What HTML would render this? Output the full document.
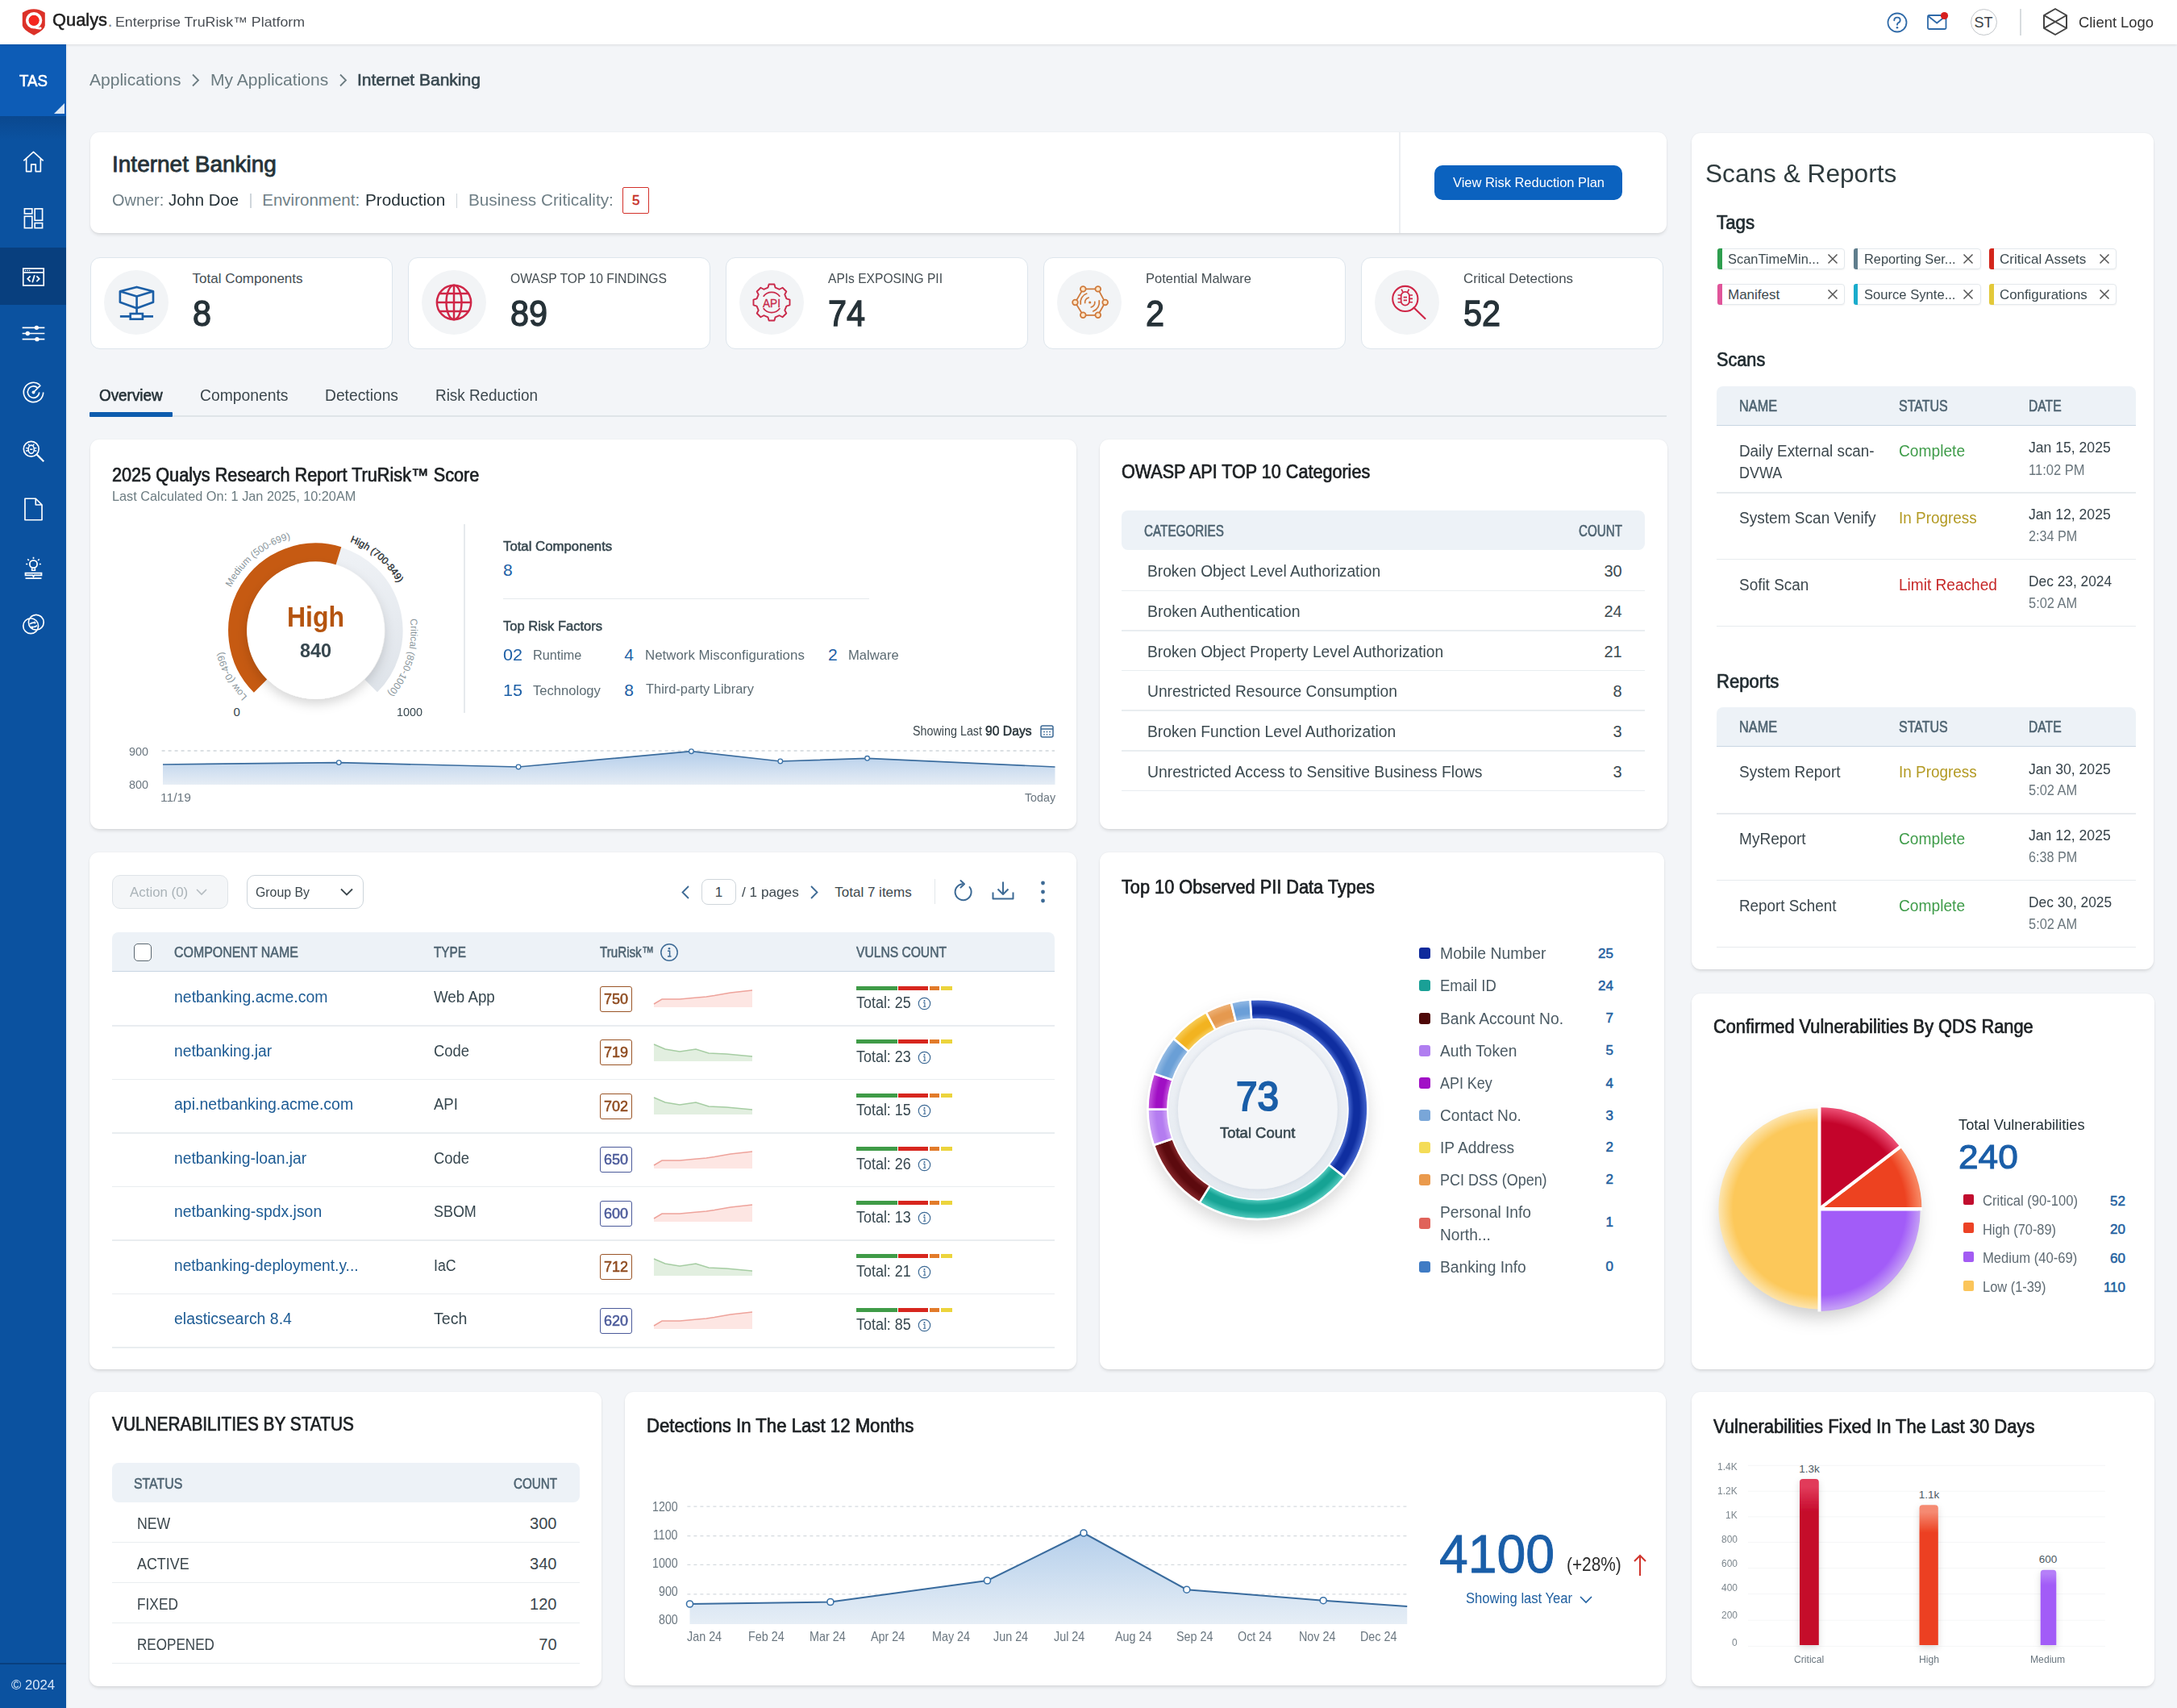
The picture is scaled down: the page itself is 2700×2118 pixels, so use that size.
<!DOCTYPE html><html><head><meta charset="utf-8"><style>
html,body{margin:0;padding:0}
body{width:2700px;height:2118px;overflow:hidden;position:relative;background:#f3f5f8;font-family:"Liberation Sans",sans-serif}
.t{position:absolute;line-height:1;white-space:nowrap;transform-origin:0 50%}
.b{position:absolute}
svg.b{overflow:visible}
</style></head><body>
<div class="b" style="left:0.0px;top:0.0px;width:2700.0px;height:55.0px;background:#fff;box-shadow:0 1px 3px rgba(0,0,0,0.10);z-index:5"></div>
<svg class="b" style="left:26.0px;top:10.0px;z-index:6" width="32" height="36" viewBox="0 0 32 36"><path d="M1.8 5.7 Q15.8 -3 29.8 5.7 L29.8 21.5 Q29.8 27 16.1 33.8 Q2.3 27 1.8 21.5 Z" fill="#dc3128"/>
<circle cx="16.1" cy="15.3" r="8.4" fill="none" stroke="#fff" stroke-width="3.6"/>
<circle cx="16.1" cy="15.3" r="6.2" fill="#f5261e"/>
<path d="M16.5 23.6 Q20.5 25.5 24.2 25" fill="none" stroke="#fff" stroke-width="2.8" stroke-linecap="round"/></svg>
<div class="t" style="left:65.4px;top:14.8px;font-size:21.5px;color:#1e1e1e;transform:scaleX(1.0162);-webkit-text-stroke:0.5px #1e1e1e;z-index:6">Qualys</div>
<div class="t" style="left:133.5px;top:15.4px;font-size:22px;color:#888;z-index:6">.</div>
<div class="t" style="left:142.5px;top:18.6px;font-size:17px;color:#4a4f55;transform:scaleX(1.0452);z-index:6">Enterprise TruRisk™ Platform</div>
<svg class="b" style="left:2339.0px;top:14.0px;z-index:6" width="28" height="28" viewBox="0 0 28 28"><circle cx="14" cy="14" r="11.5" fill="none" stroke="#2f6aa8" stroke-width="1.8"/><path d="M10.3 11.2 Q10.3 7.6 14 7.6 Q17.7 7.6 17.7 11 Q17.7 13.2 15.2 14.3 Q14 14.9 14 16.8" fill="none" stroke="#2f6aa8" stroke-width="1.9" stroke-linecap="round"/><circle cx="14" cy="20.2" r="1.3" fill="#2f6aa8"/></svg>
<svg class="b" style="left:2389.0px;top:14.0px;z-index:6" width="30" height="26" viewBox="0 0 30 26"><rect x="2" y="5" width="22.5" height="17" rx="1.5" fill="none" stroke="#2f6aa8" stroke-width="1.8"/><path d="M2.5 6 L13.2 14.5 L24 6" fill="none" stroke="#2f6aa8" stroke-width="1.8"/><circle cx="22.5" cy="5.5" r="4.6" fill="#d71f1f"/></svg>
<div class="b" style="left:2443.5px;top:11px;width:31px;height:31px;border:1.3px solid #c2c6ca;border-radius:50%;z-index:6"></div>
<div class="t" style="left:2448.5px;top:19.3px;font-size:18px;color:#3a3f44;z-index:6">ST</div>
<div class="b" style="left:2505.0px;top:11.0px;width:1.5px;height:33.0px;background:#d8dcdf;z-index:6"></div>
<svg class="b" style="left:2532.0px;top:9.0px;z-index:6" width="34" height="36" viewBox="0 0 34 36"><path d="M17 2 L31 10 L31 26 L17 34 L3 26 L3 10 Z M3 10 L31 26 M31 10 L3 26 M17 2 L17 2" fill="none" stroke="#444" stroke-width="2" stroke-linejoin="round"/></svg>
<div class="t" style="left:2578.0px;top:17.9px;font-size:19px;color:#333;transform:scaleX(0.9675);z-index:6">Client Logo</div>
<div class="b" style="left:0.0px;top:55.0px;width:83.0px;height:2063.0px;background:#0b52a0"></div>
<div class="b" style="left:82.0px;top:55.0px;width:1.5px;height:2063.0px;background:#e9eef4"></div>
<div class="b" style="left:0.0px;top:55.0px;width:82.0px;height:89.0px;background:#0d5cb6"></div>
<div class="b" style="left:0.0px;top:144.0px;width:82.0px;height:30.0px;background:linear-gradient(#0a488f,#0b52a0)"></div>
<div class="t" style="left:24.0px;top:88.7px;font-size:21px;color:#fff;transform:scaleX(0.8909);-webkit-text-stroke:0.63px #fff;">TAS</div>
<svg class="b" style="left:67.0px;top:128.0px;" width="13" height="13" viewBox="0 0 13 13"><path d="M13 0 L13 13 L0 13 Z" fill="#dfe9f5"/></svg>
<div class="b" style="left:0.0px;top:307.0px;width:82.0px;height:71.0px;background:#083f7e"></div>
<svg class="b" style="left:26.0px;top:184.5px;" width="31" height="31" viewBox="0 0 28 28"><path d="M3 13 L14 3 L25 13 M6 10.5 V25 H11.5 V17 H16.5 V25 H22 V10.5" fill="none" stroke="#fff" stroke-width="1.5" stroke-linejoin="round"/></svg>
<svg class="b" style="left:26.0px;top:254.5px;" width="31" height="31" viewBox="0 0 28 28"><rect x="4" y="3.5" width="8.5" height="5.5" fill="none" stroke="#fff" stroke-width="1.5"/><rect x="4" y="12" width="8.5" height="13" fill="none" stroke="#fff" stroke-width="1.5"/><rect x="15.5" y="3.5" width="8.5" height="13" fill="none" stroke="#fff" stroke-width="1.5"/><rect x="15.5" y="19.5" width="8.5" height="5.5" fill="none" stroke="#fff" stroke-width="1.5"/></svg>
<svg class="b" style="left:26.0px;top:327.5px;" width="31" height="31" viewBox="0 0 28 28"><rect x="2.5" y="4.5" width="23" height="19" fill="none" stroke="#fff" stroke-width="1.5"/><path d="M2.5 9 H25.5" stroke="#fff" stroke-width="1.5"/><circle cx="5" cy="6.8" r=".7" fill="#fff"/><circle cx="7.3" cy="6.8" r=".7" fill="#fff"/><circle cx="9.6" cy="6.8" r=".7" fill="#fff"/><path d="M10.5 13 L7.5 16 L10.5 19 M17.5 13 L20.5 16 L17.5 19 M15.2 12 L12.8 20" fill="none" stroke="#fff" stroke-width="1.6"/></svg>
<svg class="b" style="left:26.0px;top:397.5px;" width="31" height="31" viewBox="0 0 28 28"><path d="M1.5 7.5 H26.5 M1.5 14 H26.5 M1.5 20.5 H26.5" stroke="#fff" stroke-width="1.5"/><circle cx="17.5" cy="7.5" r="2.4" fill="#fff"/><circle cx="7.5" cy="14" r="2.4" fill="#fff"/><circle cx="18" cy="20.5" r="2.4" fill="#fff"/></svg>
<svg class="b" style="left:26.0px;top:470.5px;" width="31" height="31" viewBox="0 0 28 28"><path d="M21 5.5 A11 11 0 1 0 25 14" fill="none" stroke="#fff" stroke-width="1.5"/><path d="M18.5 9 A6.5 6.5 0 1 0 20.5 14" fill="none" stroke="#fff" stroke-width="1.5"/><circle cx="14" cy="14" r="1.8" fill="#fff"/><path d="M14 14 L22 6" stroke="#fff" stroke-width="1.5"/></svg>
<svg class="b" style="left:26.0px;top:543.5px;" width="31" height="31" viewBox="0 0 28 28"><circle cx="11.5" cy="11.5" r="8.5" fill="none" stroke="#fff" stroke-width="1.5"/><path d="M17.5 17.5 L25.5 25.5" stroke="#fff" stroke-width="2"/><ellipse cx="11.5" cy="12" rx="3.3" ry="4.6" fill="none" stroke="#fff" stroke-width="1.5"/><path d="M8.2 10.5 H5.5 M8.2 13.5 H5.5 M14.8 10.5 H17.5 M14.8 13.5 H17.5 M9.5 7.8 L8.3 6 M13.5 7.8 L14.7 6 M10 12 H13" stroke="#fff" stroke-width="1.3"/></svg>
<svg class="b" style="left:26.0px;top:615.5px;" width="31" height="31" viewBox="0 0 28 28"><path d="M4.5 2 H16.5 L23.5 9 V26 H4.5 Z M16.5 2 V9 H23.5" fill="none" stroke="#fff" stroke-width="1.5" stroke-linejoin="round"/></svg>
<svg class="b" style="left:26.0px;top:688.5px;" width="31" height="31" viewBox="0 0 28 28"><circle cx="14" cy="9.5" r="4.2" fill="none" stroke="#fff" stroke-width="1.6"/><path d="M12.3 14 V16.5 H15.7 V14" fill="none" stroke="#fff" stroke-width="1.5"/><path d="M14 1.5 V3.5 M7.5 4 L8.9 5.4 M20.5 4 L19.1 5.4 M5.5 9.5 H7.5 M20.5 9.5 H22.5" stroke="#fff" stroke-width="1.5"/><path d="M5 19.5 H23 V22 H15 L14 23.5 L13 22 H5 Z M5 25.5 H23" fill="none" stroke="#fff" stroke-width="1.6"/></svg>
<svg class="b" style="left:26.0px;top:758.5px;" width="31" height="31" viewBox="0 0 28 28"><circle cx="11" cy="15.5" r="8.5" fill="none" stroke="#fff" stroke-width="1.5"/><circle cx="17" cy="11.5" r="8.5" fill="none" stroke="#fff" stroke-width="1.5"/><path d="M10 13.5 Q13 10.8 16.5 12.5 M16.5 12.5 L14.8 10.6 M18 15 Q15 17.8 11.5 16.2 M11.5 16.2 L13.2 18" fill="none" stroke="#fff" stroke-width="1.4"/></svg>
<div class="b" style="left:0.0px;top:2061.5px;width:82.0px;height:2.0px;background:#083f7e"></div>
<div class="t" style="left:14.0px;top:2081.1px;font-size:17px;color:#d6e6f8;transform:scaleX(0.9806);">© 2024</div>
<div class="t" style="left:111.2px;top:88.8px;font-size:20.7px;color:#6b7b80;transform:scaleX(1.0168);">Applications</div>
<svg class="b" style="left:236.0px;top:91.0px;" width="13" height="17" viewBox="0 0 13 17"><path d="M3 1.5 L10 8.5 L3 15.5" fill="none" stroke="#6b7b80" stroke-width="1.8"/></svg>
<div class="t" style="left:260.5px;top:88.8px;font-size:20.7px;color:#6b7b80;transform:scaleX(1.0179);">My Applications</div>
<svg class="b" style="left:419.0px;top:91.0px;" width="13" height="17" viewBox="0 0 13 17"><path d="M3 1.5 L10 8.5 L3 15.5" fill="none" stroke="#6b7b80" stroke-width="1.8"/></svg>
<div class="t" style="left:442.7px;top:88.8px;font-size:20.7px;color:#37474f;transform:scaleX(1.0142);-webkit-text-stroke:0.62px #37474f;">Internet Banking</div>
<div class="b" style="left:112.0px;top:164.0px;width:1955.0px;height:125.0px;background:#fff;border-radius:11px;box-shadow:0 3px 4px -1px rgba(0,0,0,0.12),0 0 2px rgba(0,0,0,0.07);"></div>
<div class="b" style="left:1735.0px;top:164.0px;width:1.5px;height:125.0px;background:#eceff2"></div>
<div class="t" style="left:139.0px;top:190.3px;font-size:28px;color:#263238;-webkit-text-stroke:0.84px #263238;">Internet Banking</div>
<div class="t" style="left:138.5px;top:238.1px;font-size:20.5px;color:#6f7f86;transform:scaleX(0.9728);">Owner:</div>
<div class="t" style="left:208.8px;top:238.1px;font-size:20.5px;color:#263238;transform:scaleX(0.9936);">John Doe</div>
<div class="b" style="left:310.2px;top:240.0px;width:1.5px;height:18.0px;background:#cfd6db"></div>
<div class="t" style="left:325.3px;top:238.1px;font-size:20.5px;color:#6f7f86;">Environment:</div>
<div class="t" style="left:452.7px;top:238.1px;font-size:20.5px;color:#263238;transform:scaleX(1.0121);">Production</div>
<div class="b" style="left:565.6px;top:240.0px;width:1.5px;height:18.0px;background:#cfd6db"></div>
<div class="t" style="left:580.8px;top:238.1px;font-size:20.5px;color:#6f7f86;transform:scaleX(1.0117);">Business Criticality:</div>
<div class="b" style="left:772.2px;top:232.3px;width:33px;height:32.3px;border:1.5px solid #d3302a;box-sizing:border-box;border-radius:2px"></div>
<div class="t" style="left:784.0px;top:240.1px;font-size:17px;color:#c62d26;-webkit-text-stroke:0.51px #c62d26;">5</div>
<div class="b" style="left:1779.0px;top:205.0px;width:233.0px;height:43.0px;background:#0b62bf;border-radius:10px"></div>
<div class="t" style="left:1802.0px;top:218.1px;font-size:17px;color:#fff;transform:scaleX(0.9674);">View Risk Reduction Plan</div>
<div class="b" style="left:112px;top:319px;width:375px;height:114px;background:#fff;border:1.5px solid #dde5ec;box-sizing:border-box;border-radius:12px"></div>
<div class="b" style="left:128.5px;top:335px;width:80px;height:80px;background:#f2f4f6;border-radius:50%"></div>
<svg class="b" style="left:133.5px;top:340.0px;" width="70" height="70" viewBox="0 0 48 48"><path d="M24.4 10.9 L38.4 14.6 L38.4 23.8 L24.4 29 L10.2 23.8 L10.2 14.6 Z M10.2 14.6 L24.4 18.8 L38.4 14.6 M24.4 18.8 V29" fill="none" stroke="#1c5fa6" stroke-width="1.8" stroke-linejoin="round"/><path d="M24.4 29 V33.6 M10.2 35.9 H38.4" stroke="#1c5fa6" stroke-width="1.8"/><rect x="19" y="33.6" width="10.4" height="4.6" fill="#fff" stroke="#1c5fa6" stroke-width="1.8"/></svg>
<div class="t" style="left:238.5px;top:337.0px;font-size:17px;color:#444d52;">Total Components</div>
<div class="t" style="left:238.5px;top:366.8px;font-size:44.5px;color:#263238;transform:scaleX(0.9300);-webkit-text-stroke:1.33px #263238;">8</div>
<div class="b" style="left:506px;top:319px;width:375px;height:114px;background:#fff;border:1.5px solid #dde5ec;box-sizing:border-box;border-radius:12px"></div>
<div class="b" style="left:522.5px;top:335px;width:80px;height:80px;background:#f2f4f6;border-radius:50%"></div>
<svg class="b" style="left:527.5px;top:340.0px;" width="70" height="70" viewBox="0 0 48 48"><circle cx="24" cy="24" r="14.5" fill="none" stroke="#cf2647" stroke-width="1.7"/><ellipse cx="24" cy="24" rx="6.5" ry="14.5" fill="none" stroke="#cf2647" stroke-width="1.7"/><path d="M24 9.5 V38.5 M9.5 24 H38.5 M11.5 16.5 H36.5 M11.5 31.5 H36.5" stroke="#cf2647" stroke-width="1.7"/></svg>
<div class="t" style="left:632.5px;top:337.0px;font-size:17px;color:#444d52;transform:scaleX(0.9208);">OWASP TOP 10 FINDINGS</div>
<div class="t" style="left:632.5px;top:366.8px;font-size:44.5px;color:#263238;transform:scaleX(0.9300);-webkit-text-stroke:1.33px #263238;">89</div>
<div class="b" style="left:900px;top:319px;width:375px;height:114px;background:#fff;border:1.5px solid #dde5ec;box-sizing:border-box;border-radius:12px"></div>
<div class="b" style="left:916.5px;top:335px;width:80px;height:80px;background:#f2f4f6;border-radius:50%"></div>
<svg class="b" style="left:921.5px;top:340.0px;" width="70" height="70" viewBox="0 0 48 48"><path d="M20.86 11.39 L21.69 8.57 L26.31 8.57 L27.14 11.39 L30.70 12.86 L33.28 11.46 L36.54 14.72 L35.14 17.30 L36.61 20.86 L39.43 21.69 L39.43 26.31 L36.61 27.14 L35.14 30.70 L36.54 33.28 L33.28 36.54 L30.70 35.14 L27.14 36.61 L26.31 39.43 L21.69 39.43 L20.86 36.61 L17.30 35.14 L14.72 36.54 L11.46 33.28 L12.86 30.70 L11.39 27.14 L8.57 26.31 L8.57 21.69 L11.39 20.86 L12.86 17.30 L11.46 14.72 L14.72 11.46 L17.30 12.86 Z" fill="none" stroke="#c92a4a" stroke-width="1.3" stroke-linejoin="round"/><path d="M16.96 19.07 A8.6 8.6 0 0 1 31.04 19.07 M31.04 28.93 A8.6 8.6 0 0 1 16.96 28.93" fill="none" stroke="#c92a4a" stroke-width="1.2"/><text x="24" y="27.8" font-family="Liberation Sans" font-size="10" fill="#c92a4a" stroke="#c92a4a" stroke-width="0.25" text-anchor="middle" textLength="15" lengthAdjust="spacingAndGlyphs">API</text></svg>
<div class="t" style="left:1026.5px;top:337.0px;font-size:17px;color:#444d52;transform:scaleX(0.9165);">APIs EXPOSING PII</div>
<div class="t" style="left:1026.5px;top:366.8px;font-size:44.5px;color:#263238;transform:scaleX(0.9300);-webkit-text-stroke:1.33px #263238;">74</div>
<div class="b" style="left:1294px;top:319px;width:375px;height:114px;background:#fff;border:1.5px solid #dde5ec;box-sizing:border-box;border-radius:12px"></div>
<div class="b" style="left:1310.5px;top:335px;width:80px;height:80px;background:#f2f4f6;border-radius:50%"></div>
<svg class="b" style="left:1315.5px;top:340.0px;" width="70" height="70" viewBox="0 0 48 48"><path d="M18.70 12.60 L31.40 12.60 L37.50 24.00 L31.40 34.80 L18.70 34.80 L12.00 24.00 Z" fill="none" stroke="#cf7a3c" stroke-width="1.2"/><circle cx="18.70" cy="12.60" r="2.3" fill="#ffe6c8" stroke="#cf7a3c" stroke-width="1.2"/><circle cx="31.40" cy="12.60" r="2.3" fill="#ffe6c8" stroke="#cf7a3c" stroke-width="1.2"/><circle cx="37.50" cy="24.00" r="2.3" fill="#ffe6c8" stroke="#cf7a3c" stroke-width="1.2"/><circle cx="31.40" cy="34.80" r="2.3" fill="#ffe6c8" stroke="#cf7a3c" stroke-width="1.2"/><circle cx="18.70" cy="34.80" r="2.3" fill="#ffe6c8" stroke="#cf7a3c" stroke-width="1.2"/><circle cx="12.00" cy="24.00" r="2.3" fill="#ffe6c8" stroke="#cf7a3c" stroke-width="1.2"/><circle cx="24.5" cy="24" r="1.1" fill="#cf7a3c"/><path d="M20.32 24.37 A4.2 4.2 0 0 1 23.41 19.94 M28.68 23.63 A4.2 4.2 0 0 1 25.59 28.06 M16.62 25.39 A8 8 0 0 1 21.76 16.48 M32.38 22.61 A8 8 0 0 1 27.24 31.52" fill="none" stroke="#cf7a3c" stroke-width="1.2" stroke-linecap="round"/></svg>
<div class="t" style="left:1420.5px;top:337.0px;font-size:17px;color:#444d52;transform:scaleX(0.9695);">Potential Malware</div>
<div class="t" style="left:1420.5px;top:366.8px;font-size:44.5px;color:#263238;transform:scaleX(0.9300);-webkit-text-stroke:1.33px #263238;">2</div>
<div class="b" style="left:1688px;top:319px;width:375px;height:114px;background:#fff;border:1.5px solid #dde5ec;box-sizing:border-box;border-radius:12px"></div>
<div class="b" style="left:1704.5px;top:335px;width:80px;height:80px;background:#f2f4f6;border-radius:50%"></div>
<svg class="b" style="left:1709.5px;top:340.0px;" width="70" height="70" viewBox="0 0 48 48"><circle cx="22.5" cy="20.9" r="10.7" fill="none" stroke="#cf2647" stroke-width="1.4"/><path d="M29.8 28.5 L39.4 37.7" stroke="#cf2647" stroke-width="1.5" stroke-linecap="round"/><rect x="19" y="15" width="7" height="11.5" rx="3.5" fill="none" stroke="#cf2647" stroke-width="1.2"/><path d="M19 17.8 H16.2 M19 20.8 H16.2 M19 23.8 H16.2 M26 17.8 H28.8 M26 20.8 H28.8 M26 23.8 H28.8 M20.5 15.2 L19.3 12.8 M24.5 15.2 L25.7 12.8 M21 19.6 H24 M21 22.2 H24" stroke="#cf2647" stroke-width="1.1"/></svg>
<div class="t" style="left:1814.5px;top:337.0px;font-size:17px;color:#444d52;transform:scaleX(0.9928);">Critical Detections</div>
<div class="t" style="left:1814.5px;top:366.8px;font-size:44.5px;color:#263238;transform:scaleX(0.9300);-webkit-text-stroke:1.33px #263238;">52</div>
<div class="b" style="left:111.0px;top:515.0px;width:1956.0px;height:1.5px;background:#dfe4e8"></div>
<div class="b" style="left:111.0px;top:511.0px;width:103.0px;height:5.5px;background:#0d5cae;border-radius:1px"></div>
<div class="t" style="left:123.0px;top:479.6px;font-size:20px;color:#263238;transform:scaleX(0.9439);-webkit-text-stroke:0.6px #263238;">Overview</div>
<div class="t" style="left:248.0px;top:479.6px;font-size:20px;color:#3c474d;transform:scaleX(0.9647);">Components</div>
<div class="t" style="left:402.8px;top:479.6px;font-size:20px;color:#3c474d;transform:scaleX(0.9630);">Detections</div>
<div class="t" style="left:539.5px;top:479.6px;font-size:20px;color:#3c474d;transform:scaleX(0.9442);">Risk Reduction</div>
<div class="b" style="left:2098.0px;top:165.0px;width:573.0px;height:1037.0px;background:#fff;border-radius:11px;box-shadow:0 3px 4px -1px rgba(0,0,0,0.12),0 0 2px rgba(0,0,0,0.07);"></div>
<div class="t" style="left:2114.6px;top:198.5px;font-size:32px;color:#2f3b3e;transform:scaleX(0.9883);">Scans &amp; Reports</div>
<div class="t" style="left:2129.0px;top:265.0px;font-size:23px;color:#1f2a2f;transform:scaleX(0.9689);-webkit-text-stroke:0.69px #1f2a2f;">Tags</div>
<div class="b" style="left:2130.0px;top:307.5px;width:158px;height:26px;background:#fff;border:1px solid #e3e8ec;box-sizing:border-box;border-radius:4px;box-shadow:0 1px 2px rgba(0,0,0,0.05)"></div>
<div class="b" style="left:2130.0px;top:307.5px;width:5.5px;height:26.0px;background:#2e9e4f;border-radius:3px 0 0 3px"></div>
<div class="t" style="left:2143.0px;top:312.6px;font-size:17px;color:#3d4a50;transform:scaleX(0.9661);">ScanTimeMin...</div>
<svg class="b" style="left:2265.5px;top:314.0px;" width="14" height="14" viewBox="0 0 14 14"><path d="M1.5 1.5 L12.5 12.5 M12.5 1.5 L1.5 12.5" stroke="#555" stroke-width="1.5"/></svg>
<div class="b" style="left:2298.5px;top:307.5px;width:158px;height:26px;background:#fff;border:1px solid #e3e8ec;box-sizing:border-box;border-radius:4px;box-shadow:0 1px 2px rgba(0,0,0,0.05)"></div>
<div class="b" style="left:2298.5px;top:307.5px;width:5.5px;height:26.0px;background:#5f7d8c;border-radius:3px 0 0 3px"></div>
<div class="t" style="left:2311.5px;top:312.6px;font-size:17px;color:#3d4a50;transform:scaleX(0.9607);">Reporting Ser...</div>
<svg class="b" style="left:2434.0px;top:314.0px;" width="14" height="14" viewBox="0 0 14 14"><path d="M1.5 1.5 L12.5 12.5 M12.5 1.5 L1.5 12.5" stroke="#555" stroke-width="1.5"/></svg>
<div class="b" style="left:2467.0px;top:307.5px;width:158px;height:26px;background:#fff;border:1px solid #e3e8ec;box-sizing:border-box;border-radius:4px;box-shadow:0 1px 2px rgba(0,0,0,0.05)"></div>
<div class="b" style="left:2467.0px;top:307.5px;width:5.5px;height:26.0px;background:#d3261c;border-radius:3px 0 0 3px"></div>
<div class="t" style="left:2480.0px;top:312.6px;font-size:17px;color:#3d4a50;transform:scaleX(1.0051);">Critical Assets</div>
<svg class="b" style="left:2602.5px;top:314.0px;" width="14" height="14" viewBox="0 0 14 14"><path d="M1.5 1.5 L12.5 12.5 M12.5 1.5 L1.5 12.5" stroke="#555" stroke-width="1.5"/></svg>
<div class="b" style="left:2130.0px;top:351.7px;width:158px;height:26px;background:#fff;border:1px solid #e3e8ec;box-sizing:border-box;border-radius:4px;box-shadow:0 1px 2px rgba(0,0,0,0.05)"></div>
<div class="b" style="left:2130.0px;top:351.7px;width:5.5px;height:26.0px;background:#e0559a;border-radius:3px 0 0 3px"></div>
<div class="t" style="left:2143.0px;top:356.8px;font-size:17px;color:#3d4a50;">Manifest</div>
<svg class="b" style="left:2265.5px;top:358.2px;" width="14" height="14" viewBox="0 0 14 14"><path d="M1.5 1.5 L12.5 12.5 M12.5 1.5 L1.5 12.5" stroke="#555" stroke-width="1.5"/></svg>
<div class="b" style="left:2298.5px;top:351.7px;width:158px;height:26px;background:#fff;border:1px solid #e3e8ec;box-sizing:border-box;border-radius:4px;box-shadow:0 1px 2px rgba(0,0,0,0.05)"></div>
<div class="b" style="left:2298.5px;top:351.7px;width:5.5px;height:26.0px;background:#1aaccc;border-radius:3px 0 0 3px"></div>
<div class="t" style="left:2311.5px;top:356.8px;font-size:17px;color:#3d4a50;transform:scaleX(0.9763);">Source Synte...</div>
<svg class="b" style="left:2434.0px;top:358.2px;" width="14" height="14" viewBox="0 0 14 14"><path d="M1.5 1.5 L12.5 12.5 M12.5 1.5 L1.5 12.5" stroke="#555" stroke-width="1.5"/></svg>
<div class="b" style="left:2467.0px;top:351.7px;width:158px;height:26px;background:#fff;border:1px solid #e3e8ec;box-sizing:border-box;border-radius:4px;box-shadow:0 1px 2px rgba(0,0,0,0.05)"></div>
<div class="b" style="left:2467.0px;top:351.7px;width:5.5px;height:26.0px;background:#e3c93a;border-radius:3px 0 0 3px"></div>
<div class="t" style="left:2480.0px;top:356.8px;font-size:17px;color:#3d4a50;transform:scaleX(0.9916);">Configurations</div>
<svg class="b" style="left:2602.5px;top:358.2px;" width="14" height="14" viewBox="0 0 14 14"><path d="M1.5 1.5 L12.5 12.5 M12.5 1.5 L1.5 12.5" stroke="#555" stroke-width="1.5"/></svg>
<div class="b" style="left:2129.0px;top:479.0px;width:519.5px;height:48.5px;background:#edf2f7;border-radius:8px 8px 0 0;border-bottom:1.5px solid #c8d5e2;box-sizing:border-box"></div>
<div class="t" style="left:2157.0px;top:494.0px;font-size:19.5px;color:#4f6472;transform:scaleX(0.8355);-webkit-text-stroke:0.58px #4f6472;">NAME</div>
<div class="t" style="left:2354.8px;top:494.0px;font-size:19.5px;color:#4f6472;transform:scaleX(0.8213);-webkit-text-stroke:0.58px #4f6472;">STATUS</div>
<div class="t" style="left:2516.0px;top:494.0px;font-size:19.5px;color:#4f6472;transform:scaleX(0.8035);-webkit-text-stroke:0.58px #4f6472;">DATE</div>
<div class="t" style="left:2157.0px;top:549.1px;font-size:20px;color:#3c474d;transform:scaleX(0.9421);">Daily External scan-</div>
<div class="t" style="left:2157.0px;top:576.1px;font-size:20px;color:#3c474d;transform:scaleX(0.8984);">DVWA</div>
<div class="t" style="left:2354.8px;top:549.1px;font-size:20px;color:#3f9c4a;transform:scaleX(0.9591);">Complete</div>
<div class="t" style="left:2516.0px;top:545.3px;font-size:19px;color:#37434a;transform:scaleX(0.9257);">Jan 15, 2025</div>
<div class="t" style="left:2516.0px;top:573.8px;font-size:18px;color:#6a767d;transform:scaleX(0.9178);">11:02 PM</div>
<div class="b" style="left:2129.0px;top:610.0px;width:519.5px;height:1.5px;background:#e7ebee"></div>
<div class="t" style="left:2157.0px;top:632.1px;font-size:20px;color:#3c474d;transform:scaleX(0.9531);">System Scan Venify</div>
<div class="t" style="left:2354.8px;top:632.1px;font-size:20px;color:#b39a23;transform:scaleX(0.9452);">In Progress</div>
<div class="t" style="left:2516.0px;top:627.9px;font-size:19px;color:#37434a;transform:scaleX(0.9257);">Jan 12, 2025</div>
<div class="t" style="left:2516.0px;top:656.3px;font-size:18px;color:#6a767d;transform:scaleX(0.8986);">2:34 PM</div>
<div class="b" style="left:2129.0px;top:692.5px;width:519.5px;height:1.5px;background:#e7ebee"></div>
<div class="t" style="left:2157.0px;top:714.8px;font-size:20px;color:#3c474d;transform:scaleX(0.9466);">Sofit Scan</div>
<div class="t" style="left:2354.8px;top:714.8px;font-size:20px;color:#c62828;transform:scaleX(0.9534);">Limit Reached</div>
<div class="t" style="left:2516.0px;top:710.9px;font-size:19px;color:#37434a;transform:scaleX(0.9123);">Dec 23, 2024</div>
<div class="t" style="left:2516.0px;top:739.3px;font-size:18px;color:#6a767d;transform:scaleX(0.9121);">5:02 AM</div>
<div class="b" style="left:2129.0px;top:775.5px;width:519.5px;height:1.5px;background:#e7ebee"></div>
<div class="t" style="left:2129.0px;top:434.5px;font-size:23px;color:#1f2a2f;transform:scaleX(0.9424);-webkit-text-stroke:0.69px #1f2a2f;">Scans</div>
<div class="t" style="left:2129.0px;top:833.7px;font-size:23px;color:#1f2a2f;transform:scaleX(0.9602);-webkit-text-stroke:0.69px #1f2a2f;">Reports</div>
<div class="b" style="left:2129.0px;top:877.0px;width:519.5px;height:48.5px;background:#edf2f7;border-radius:8px 8px 0 0;border-bottom:1.5px solid #c8d5e2;box-sizing:border-box"></div>
<div class="t" style="left:2157.0px;top:892.0px;font-size:19.5px;color:#4f6472;transform:scaleX(0.8355);-webkit-text-stroke:0.58px #4f6472;">NAME</div>
<div class="t" style="left:2354.8px;top:892.0px;font-size:19.5px;color:#4f6472;transform:scaleX(0.8213);-webkit-text-stroke:0.58px #4f6472;">STATUS</div>
<div class="t" style="left:2516.0px;top:892.0px;font-size:19.5px;color:#4f6472;transform:scaleX(0.8035);-webkit-text-stroke:0.58px #4f6472;">DATE</div>
<div class="t" style="left:2157.0px;top:947.1px;font-size:20px;color:#3c474d;transform:scaleX(0.9490);">System Report</div>
<div class="t" style="left:2354.8px;top:947.1px;font-size:20px;color:#b39a23;transform:scaleX(0.9452);">In Progress</div>
<div class="t" style="left:2516.0px;top:943.6px;font-size:19px;color:#37434a;transform:scaleX(0.9257);">Jan 30, 2025</div>
<div class="t" style="left:2516.0px;top:970.8px;font-size:18px;color:#6a767d;transform:scaleX(0.9121);">5:02 AM</div>
<div class="b" style="left:2129.0px;top:1008.0px;width:519.5px;height:1.5px;background:#e7ebee"></div>
<div class="t" style="left:2157.0px;top:1030.1px;font-size:20px;color:#3c474d;transform:scaleX(0.9534);">MyReport</div>
<div class="t" style="left:2354.8px;top:1030.1px;font-size:20px;color:#3f9c4a;transform:scaleX(0.9591);">Complete</div>
<div class="t" style="left:2516.0px;top:1026.4px;font-size:19px;color:#37434a;transform:scaleX(0.9257);">Jan 12, 2025</div>
<div class="t" style="left:2516.0px;top:1053.8px;font-size:18px;color:#6a767d;transform:scaleX(0.8986);">6:38 PM</div>
<div class="b" style="left:2129.0px;top:1090.5px;width:519.5px;height:1.5px;background:#e7ebee"></div>
<div class="t" style="left:2157.0px;top:1113.1px;font-size:20px;color:#3c474d;transform:scaleX(0.9423);">Report Schent</div>
<div class="t" style="left:2354.8px;top:1113.1px;font-size:20px;color:#3f9c4a;transform:scaleX(0.9591);">Complete</div>
<div class="t" style="left:2516.0px;top:1109.4px;font-size:19px;color:#37434a;transform:scaleX(0.9123);">Dec 30, 2025</div>
<div class="t" style="left:2516.0px;top:1136.8px;font-size:18px;color:#6a767d;transform:scaleX(0.9121);">5:02 AM</div>
<div class="b" style="left:2129.0px;top:1173.5px;width:519.5px;height:1.5px;background:#e7ebee"></div>
<div class="b" style="left:112.0px;top:545.0px;width:1223.0px;height:483.0px;background:#fff;border-radius:11px;box-shadow:0 3px 4px -1px rgba(0,0,0,0.12),0 0 2px rgba(0,0,0,0.07);"></div>
<div class="t" style="left:138.6px;top:577.5px;font-size:23px;color:#1b1f22;transform:scaleX(0.9423);-webkit-text-stroke:0.69px #1b1f22;">2025 Qualys Research Report TruRisk™ Score</div>
<div class="t" style="left:138.6px;top:606.6px;font-size:17px;color:#6b7b80;transform:scaleX(0.9579);">Last Calculated On: 1 Jan 2025, 10:20AM</div>
<svg class="b" style="left:0;top:0" width="1335" height="1028"><defs><filter id="gsh" x="-30%" y="-30%" width="160%" height="160%"><feDropShadow dx="0" dy="6" stdDeviation="7" flood-color="#000" flood-opacity="0.16"/></filter><linearGradient id="trk" x1="0" y1="0" x2="0" y2="1"><stop offset="0" stop-color="#eef1f5"/><stop offset="1" stop-color="#dfe4ea"/></linearGradient></defs><path d="M419.96 689.24 A97 97 0 0 1 460.19 850.59" fill="none" stroke="url(#trk)" stroke-width="22"/><path d="M323.01 850.59 A97 97 0 0 1 419.96 689.24" fill="none" stroke="#c65a12" stroke-width="23"/><circle cx="391.6" cy="782.0" r="85" fill="#fff" filter="url(#gsh)"/><path id="lblm" d="M286.46 728.43 A118 118 0 0 1 375.18 665.15" fill="none"/><path id="lblh" d="M433.89 671.84 A118 118 0 0 1 502.48 741.64" fill="none"/><path id="lblc" d="M508.72 767.62 A118 118 0 0 1 467.45 872.39" fill="none"/><path id="lbll" d="M306.72 863.97 A118 118 0 0 1 274.05 792.28" fill="none"/><text font-family="Liberation Sans" font-size="12" fill="#8a969c"><textPath href="#lblm">Medium (500-699)</textPath></text><text font-family="Liberation Sans" font-size="12" fill="#2a2f33" stroke="#2a2f33" stroke-width="0.35"><textPath href="#lblh">High (700-849)</textPath></text><text font-family="Liberation Sans" font-size="12" fill="#8a969c"><textPath href="#lblc">Critical (850-1000)</textPath></text><text font-family="Liberation Sans" font-size="12" fill="#8a969c"><textPath href="#lbll">Low (0-499)</textPath></text></svg>
<div class="t" style="left:356.0px;top:747.1px;font-size:35px;color:#b5540f;font-weight:bold;transform:scaleX(0.9145);">High</div>
<div class="t" style="left:372.0px;top:795.8px;font-size:23px;color:#37474f;font-weight:bold;transform:scaleX(1.0199);">840</div>
<div class="t" style="left:289.6px;top:875.1px;font-size:15px;color:#37474f;">0</div>
<div class="t" style="left:492.0px;top:875.1px;font-size:15px;color:#37474f;transform:scaleX(0.9581);">1000</div>
<div class="b" style="left:575.0px;top:650.0px;width:1.5px;height:234.0px;background:#e6eaed"></div>
<div class="t" style="left:624.0px;top:668.6px;font-size:17px;color:#37474f;transform:scaleX(0.9865);-webkit-text-stroke:0.51px #37474f;">Total Components</div>
<div class="t" style="left:624.0px;top:695.5px;font-size:21px;color:#1d5fa6;">8</div>
<div class="b" style="left:624.0px;top:741.5px;width:453.5px;height:1.5px;background:#e6eaed"></div>
<div class="t" style="left:624.0px;top:768.3px;font-size:17px;color:#37474f;transform:scaleX(0.9720);-webkit-text-stroke:0.51px #37474f;">Top Risk Factors</div>
<div class="t" style="left:624.0px;top:801.2px;font-size:21px;color:#1d5fa6;transform:scaleX(1.0275);">02</div>
<div class="t" style="left:661.4px;top:803.6px;font-size:17px;color:#5c6b73;transform:scaleX(0.9539);">Runtime</div>
<div class="t" style="left:774.3px;top:801.2px;font-size:21px;color:#1d5fa6;">4</div>
<div class="t" style="left:799.6px;top:803.6px;font-size:17px;color:#5c6b73;transform:scaleX(0.9923);">Network Misconfigurations</div>
<div class="t" style="left:1027.0px;top:801.2px;font-size:21px;color:#1d5fa6;">2</div>
<div class="t" style="left:1052.0px;top:803.6px;font-size:17px;color:#5c6b73;transform:scaleX(0.9753);">Malware</div>
<div class="t" style="left:624.0px;top:845.2px;font-size:21px;color:#1d5fa6;transform:scaleX(1.0275);">15</div>
<div class="t" style="left:661.4px;top:847.6px;font-size:17px;color:#5c6b73;transform:scaleX(0.9753);">Technology</div>
<div class="t" style="left:774.3px;top:845.2px;font-size:21px;color:#1d5fa6;">8</div>
<div class="t" style="left:801.0px;top:845.6px;font-size:17px;color:#5c6b73;transform:scaleX(0.9642);">Third-party Library</div>
<div class="t" style="left:1222.4px;top:899.3px;font-size:16px;color:#263238;transform:scaleX(0.9818);-webkit-text-stroke:0.48px #263238;">90 Days</div>
<div class="t" style="left:1132.4px;top:899.3px;font-size:16px;color:#3c474d;transform:scaleX(0.8952);">Showing Last</div>
<svg class="b" style="left:1290.0px;top:898.0px;" width="17" height="17" viewBox="0 0 17 17"><rect x="1" y="2" width="15" height="14" rx="2" fill="none" stroke="#3d6a95" stroke-width="1.5"/><path d="M1 6 H16" stroke="#3d6a95" stroke-width="1.5"/><g fill="#3d6a95"><circle cx="5" cy="9.5" r=".9"/><circle cx="8.5" cy="9.5" r=".9"/><circle cx="12" cy="9.5" r=".9"/><circle cx="5" cy="12.8" r=".9"/><circle cx="8.5" cy="12.8" r=".9"/><circle cx="12" cy="12.8" r=".9"/></g></svg>
<div class="t" style="left:160.0px;top:923.8px;font-size:15px;color:#6b7780;transform:scaleX(0.9589);">900</div>
<div class="t" style="left:160.0px;top:965.1px;font-size:15px;color:#6b7780;transform:scaleX(0.9589);">800</div>
<div class="t" style="left:199.0px;top:980.9px;font-size:15px;color:#6b7780;transform:scaleX(1.0433);">11/19</div>
<div class="t" style="left:1271.0px;top:980.8px;font-size:15px;color:#6b7780;transform:scaleX(0.9493);">Today</div>
<svg class="b" style="left:0;top:0" width="1335" height="1028"><defs><linearGradient id="tg" x1="0" y1="0" x2="0" y2="1"><stop offset="0" stop-color="#b3cdea"/><stop offset="1" stop-color="#e6edf5"/></linearGradient></defs><path d="M200.6 931 H1308" stroke="#d0d5da" stroke-width="1.3" stroke-dasharray="4 4"/><path d="M202,973 L202,948 L420.3,945.6 L643,951 L857.4,931.7 L967.8,944 L1075.6,940.3 L1308.5,951 L1308.5,973 Z" fill="url(#tg)"/><polyline points="202,948 420.3,945.6 643,951 857.4,931.7 967.8,944 1075.6,940.3 1308.5,951" fill="none" stroke="#3a6c9e" stroke-width="1.7"/><circle cx="420.3" cy="945.6" r="2.8" fill="#fff" stroke="#3a72a8" stroke-width="1.3"/><circle cx="643" cy="951" r="2.8" fill="#fff" stroke="#3a72a8" stroke-width="1.3"/><circle cx="857.4" cy="931.7" r="2.8" fill="#fff" stroke="#3a72a8" stroke-width="1.3"/><circle cx="967.8" cy="944" r="2.8" fill="#fff" stroke="#3a72a8" stroke-width="1.3"/><circle cx="1075.6" cy="940.3" r="2.8" fill="#fff" stroke="#3a72a8" stroke-width="1.3"/></svg>
<div class="b" style="left:1364.0px;top:545.0px;width:703.5px;height:483.0px;background:#fff;border-radius:11px;box-shadow:0 3px 4px -1px rgba(0,0,0,0.12),0 0 2px rgba(0,0,0,0.07);"></div>
<div class="t" style="left:1391.2px;top:574.2px;font-size:23px;color:#1b1f22;transform:scaleX(0.9380);-webkit-text-stroke:0.69px #1b1f22;">OWASP API TOP 10 Categories</div>
<div class="b" style="left:1391.0px;top:633.2px;width:649.0px;height:48.7px;background:#edf2f7;border-radius:8px"></div>
<div class="t" style="left:1418.7px;top:648.4px;font-size:20.5px;color:#4f6472;transform:scaleX(0.7444);-webkit-text-stroke:0.61px #4f6472;">CATEGORIES</div>
<div class="t" style="left:1957.6px;top:648.4px;font-size:20.5px;color:#4f6472;transform:scaleX(0.7408);-webkit-text-stroke:0.61px #4f6472;">COUNT</div>
<div class="t" style="left:1423.0px;top:698.1px;font-size:20px;color:#3c4a50;transform:scaleX(0.9594);">Broken Object Level Authorization</div>
<div class="t" style="left:1989.4px;top:698.1px;font-size:20px;color:#3c4a50;">30</div>
<div class="b" style="left:1391.0px;top:731.5px;width:649.0px;height:1.5px;background:#e9edf0"></div>
<div class="t" style="left:1423.0px;top:747.8px;font-size:20px;color:#3c4a50;transform:scaleX(0.9737);">Broken Authentication</div>
<div class="t" style="left:1989.4px;top:747.8px;font-size:20px;color:#3c4a50;">24</div>
<div class="b" style="left:1391.0px;top:781.1px;width:649.0px;height:1.5px;background:#e9edf0"></div>
<div class="t" style="left:1423.0px;top:797.5px;font-size:20px;color:#3c4a50;transform:scaleX(0.9602);">Broken Object Property Level Authorization</div>
<div class="t" style="left:1989.4px;top:797.5px;font-size:20px;color:#3c4a50;">21</div>
<div class="b" style="left:1391.0px;top:830.8px;width:649.0px;height:1.5px;background:#e9edf0"></div>
<div class="t" style="left:1423.0px;top:847.2px;font-size:20px;color:#3c4a50;transform:scaleX(0.9612);">Unrestricted Resource Consumption</div>
<div class="t" style="left:2000.5px;top:847.2px;font-size:20px;color:#3c4a50;">8</div>
<div class="b" style="left:1391.0px;top:880.4px;width:649.0px;height:1.5px;background:#e9edf0"></div>
<div class="t" style="left:1423.0px;top:896.9px;font-size:20px;color:#3c4a50;transform:scaleX(0.9625);">Broken Function Level Authorization</div>
<div class="t" style="left:2000.5px;top:896.9px;font-size:20px;color:#3c4a50;">3</div>
<div class="b" style="left:1391.0px;top:930.1px;width:649.0px;height:1.5px;background:#e9edf0"></div>
<div class="t" style="left:1423.0px;top:946.6px;font-size:20px;color:#3c4a50;transform:scaleX(0.9659);">Unrestricted Access to Sensitive Business Flows</div>
<div class="t" style="left:2000.5px;top:946.6px;font-size:20px;color:#3c4a50;">3</div>
<div class="b" style="left:1391.0px;top:979.7px;width:649.0px;height:1.5px;background:#e9edf0"></div>
<div class="b" style="left:111.0px;top:1057.0px;width:1224.0px;height:640.5px;background:#fff;border-radius:11px;box-shadow:0 3px 4px -1px rgba(0,0,0,0.12),0 0 2px rgba(0,0,0,0.07);"></div>
<div class="b" style="left:138.6px;top:1084.5px;width:144px;height:42.7px;background:#f4f6f8;border:1.5px solid #dfe4e8;box-sizing:border-box;border-radius:10px"></div>
<div class="t" style="left:160.6px;top:1097.6px;font-size:17px;color:#aab3b8;transform:scaleX(0.9927);">Action (0)</div>
<svg class="b" style="left:242.0px;top:1100.0px;" width="16" height="12" viewBox="0 0 16 12"><path d="M2 3 L8 9 L14 3" fill="none" stroke="#b5bcc1" stroke-width="1.6"/></svg>
<div class="b" style="left:305.9px;top:1084.5px;width:145.5px;height:42.7px;background:#fff;border:1.5px solid #cdd5db;box-sizing:border-box;border-radius:10px"></div>
<div class="t" style="left:317.0px;top:1097.6px;font-size:17px;color:#3c474d;transform:scaleX(0.9327);">Group By</div>
<svg class="b" style="left:421.0px;top:1100.0px;" width="18" height="12" viewBox="0 0 18 12"><path d="M2 2.5 L9 9.5 L16 2.5" fill="none" stroke="#3c474d" stroke-width="1.8"/></svg>
<svg class="b" style="left:843.0px;top:1097.0px;" width="14" height="19" viewBox="0 0 14 19"><path d="M11 2 L3.5 9.5 L11 17" fill="none" stroke="#3d6a95" stroke-width="1.8"/></svg>
<div class="b" style="left:870.2px;top:1090px;width:42.7px;height:31.8px;border:1.3px solid #cfd6db;box-sizing:border-box;border-radius:8px;background:#fff"></div>
<div class="t" style="left:886.8px;top:1097.9px;font-size:17px;color:#3c474d;">1</div>
<div class="t" style="left:919.5px;top:1097.9px;font-size:17px;color:#3c474d;transform:scaleX(1.0118);">/ 1 pages</div>
<svg class="b" style="left:1003.0px;top:1097.0px;" width="14" height="19" viewBox="0 0 14 19"><path d="M3 2 L10.5 9.5 L3 17" fill="none" stroke="#3d6a95" stroke-width="1.8"/></svg>
<div class="t" style="left:1035.3px;top:1097.9px;font-size:17px;color:#3c474d;">Total 7 items</div>
<div class="b" style="left:1158.5px;top:1090.0px;width:1.5px;height:31.0px;background:#e3e7ea"></div>
<svg class="b" style="left:1180.0px;top:1090.0px;" width="30" height="30" viewBox="0 0 30 30"><path d="M22.5 10 A10 10 0 1 1 13.5 6.2" fill="none" stroke="#3d6a95" stroke-width="2" stroke-linecap="round"/><path d="M11.5 2 L16 6.3 L11.5 10.5" fill="none" stroke="#3d6a95" stroke-width="2" stroke-linejoin="round" stroke-linecap="round"/></svg>
<svg class="b" style="left:1229.0px;top:1091.0px;" width="30" height="28" viewBox="0 0 30 28"><path d="M15 2.5 V18 M8.5 11.5 L15 18 L21.5 11.5 M2.5 15.5 V23.5 H27.5 V15.5" fill="none" stroke="#3d6a95" stroke-width="2" stroke-linejoin="round"/></svg>
<svg class="b" style="left:1288.0px;top:1091.0px;" width="12" height="30" viewBox="0 0 12 30"><circle cx="5.5" cy="4" r="2.4" fill="#3d6a95"/><circle cx="5.5" cy="15" r="2.4" fill="#3d6a95"/><circle cx="5.5" cy="26" r="2.4" fill="#3d6a95"/></svg>
<div class="b" style="left:138.6px;top:1156.0px;width:1169.0px;height:49.0px;background:#edf2f7;border-radius:8px 8px 0 0;border-bottom:1.5px solid #c8d5e2;box-sizing:border-box"></div>
<div class="b" style="left:166px;top:1170px;width:21.5px;height:21.5px;border:1.6px solid #5a6770;box-sizing:border-box;border-radius:5px;background:#fff"></div>
<div class="t" style="left:216.3px;top:1170.9px;font-size:19px;color:#4f6472;transform:scaleX(0.8389);-webkit-text-stroke:0.57px #4f6472;">COMPONENT NAME</div>
<div class="t" style="left:538.3px;top:1170.9px;font-size:19px;color:#4f6472;transform:scaleX(0.8053);-webkit-text-stroke:0.57px #4f6472;">TYPE</div>
<div class="t" style="left:744.2px;top:1170.9px;font-size:19px;color:#4f6472;transform:scaleX(0.7987);-webkit-text-stroke:0.57px #4f6472;">TruRisk™</div>
<svg class="b" style="left:817.5px;top:1169.0px;" width="24" height="24" viewBox="0 0 24 24"><circle cx="12" cy="12" r="10.2" fill="none" stroke="#3d6a95" stroke-width="1.5"/><circle cx="12" cy="7.3" r="1.3" fill="#3d6a95"/><path d="M10 10.2 H12.6 V17 M10 17 H14.5" fill="none" stroke="#3d6a95" stroke-width="1.5"/></svg>
<div class="t" style="left:1062.2px;top:1170.9px;font-size:19px;color:#4f6472;transform:scaleX(0.8222);-webkit-text-stroke:0.57px #4f6472;">VULNS COUNT</div>
<div class="t" style="left:216.3px;top:1226.1px;font-size:20px;color:#1d5b94;transform:scaleX(0.9734);">netbanking.acme.com</div>
<div class="t" style="left:538.3px;top:1226.1px;font-size:20px;color:#37474f;transform:scaleX(0.9381);">Web App</div>
<div class="b" style="left:744.2px;top:1222.7px;width:39.4px;height:32px;border:1.6px solid #9a5426;box-sizing:border-box;border-radius:3px;background:#fff"></div>
<div class="t" style="left:748.9px;top:1230.7px;font-size:17.5px;color:#8e4a1e;transform:scaleX(1.0274);-webkit-text-stroke:0.53px #8e4a1e;">750</div>
<svg class="b" style="left:811.0px;top:1227.0px;" width="122" height="22" viewBox="0 0 122 22"><path d="M0,22 L0,18 L10,12 L32,12 L48,10.5 L65,9 L75,7.5 L95,4 L122,1 L122,22 Z" fill="#fde6e3"/><polyline points="0,18 10,12 32,12 48,10.5 65,9 75,7.5 95,4 122,1" fill="none" stroke="#eea39b" stroke-width="1.5"/></svg>
<div class="b" style="left:1062.0px;top:1222.7px;width:50.6px;height:5.0px;background:#3f9b47"></div>
<div class="b" style="left:1114.4px;top:1222.7px;width:37.1px;height:5.0px;background:#d7261e"></div>
<div class="b" style="left:1153.0px;top:1222.7px;width:12.0px;height:5.0px;background:#e27b2a"></div>
<div class="b" style="left:1166.7px;top:1222.7px;width:14.0px;height:5.0px;background:#ecd43c"></div>
<div class="t" style="left:1062.0px;top:1233.3px;font-size:20px;color:#37474f;transform:scaleX(0.8965);">Total: 25</div>
<svg class="b" style="left:1137.5px;top:1236.0px;" width="17" height="17" viewBox="0 0 17 17"><circle cx="8.5" cy="8.5" r="7.2" fill="none" stroke="#3d6a95" stroke-width="1.2"/><circle cx="8.5" cy="5" r="1" fill="#3d6a95"/><path d="M7 7.3 H8.9 V12.3 M7 12.3 H10.3" fill="none" stroke="#3d6a95" stroke-width="1.1"/></svg>
<div class="b" style="left:138.5px;top:1271.0px;width:1169.0px;height:1.5px;background:#e9edf0"></div>
<div class="t" style="left:216.3px;top:1292.6px;font-size:20px;color:#1d5b94;transform:scaleX(0.9652);">netbanking.jar</div>
<div class="t" style="left:538.3px;top:1292.6px;font-size:20px;color:#37474f;transform:scaleX(0.9202);">Code</div>
<div class="b" style="left:744.2px;top:1289.2px;width:39.4px;height:32px;border:1.6px solid #9a5426;box-sizing:border-box;border-radius:3px;background:#fff"></div>
<div class="t" style="left:748.9px;top:1297.2px;font-size:17.5px;color:#8e4a1e;transform:scaleX(1.0274);-webkit-text-stroke:0.53px #8e4a1e;">719</div>
<svg class="b" style="left:811.0px;top:1293.5px;" width="122" height="22" viewBox="0 0 122 22"><path d="M0,22 L0,1 L14,7 L32,10 L52,7 L68,12 L90,13 L122,16 L122,22 Z" fill="#e2efe0"/><polyline points="0,1 14,7 32,10 52,7 68,12 90,13 122,16" fill="none" stroke="#a6cda3" stroke-width="1.5"/></svg>
<div class="b" style="left:1062.0px;top:1289.2px;width:50.6px;height:5.0px;background:#3f9b47"></div>
<div class="b" style="left:1114.4px;top:1289.2px;width:37.1px;height:5.0px;background:#d7261e"></div>
<div class="b" style="left:1153.0px;top:1289.2px;width:12.0px;height:5.0px;background:#e27b2a"></div>
<div class="b" style="left:1166.7px;top:1289.2px;width:14.0px;height:5.0px;background:#ecd43c"></div>
<div class="t" style="left:1062.0px;top:1299.8px;font-size:20px;color:#37474f;transform:scaleX(0.8965);">Total: 23</div>
<svg class="b" style="left:1137.5px;top:1302.5px;" width="17" height="17" viewBox="0 0 17 17"><circle cx="8.5" cy="8.5" r="7.2" fill="none" stroke="#3d6a95" stroke-width="1.2"/><circle cx="8.5" cy="5" r="1" fill="#3d6a95"/><path d="M7 7.3 H8.9 V12.3 M7 12.3 H10.3" fill="none" stroke="#3d6a95" stroke-width="1.1"/></svg>
<div class="b" style="left:138.5px;top:1337.5px;width:1169.0px;height:1.5px;background:#e9edf0"></div>
<div class="t" style="left:216.3px;top:1359.1px;font-size:20px;color:#1d5b94;transform:scaleX(0.9750);">api.netbanking.acme.com</div>
<div class="t" style="left:538.3px;top:1359.1px;font-size:20px;color:#37474f;transform:scaleX(0.9275);">API</div>
<div class="b" style="left:744.2px;top:1355.7px;width:39.4px;height:32px;border:1.6px solid #9a5426;box-sizing:border-box;border-radius:3px;background:#fff"></div>
<div class="t" style="left:748.9px;top:1363.7px;font-size:17.5px;color:#8e4a1e;transform:scaleX(1.0274);-webkit-text-stroke:0.53px #8e4a1e;">702</div>
<svg class="b" style="left:811.0px;top:1360.0px;" width="122" height="22" viewBox="0 0 122 22"><path d="M0,22 L0,1 L14,7 L32,10 L52,7 L68,12 L90,13 L122,16 L122,22 Z" fill="#e2efe0"/><polyline points="0,1 14,7 32,10 52,7 68,12 90,13 122,16" fill="none" stroke="#a6cda3" stroke-width="1.5"/></svg>
<div class="b" style="left:1062.0px;top:1355.7px;width:50.6px;height:5.0px;background:#3f9b47"></div>
<div class="b" style="left:1114.4px;top:1355.7px;width:37.1px;height:5.0px;background:#d7261e"></div>
<div class="b" style="left:1153.0px;top:1355.7px;width:12.0px;height:5.0px;background:#e27b2a"></div>
<div class="b" style="left:1166.7px;top:1355.7px;width:14.0px;height:5.0px;background:#ecd43c"></div>
<div class="t" style="left:1062.0px;top:1366.3px;font-size:20px;color:#37474f;transform:scaleX(0.8965);">Total: 15</div>
<svg class="b" style="left:1137.5px;top:1369.0px;" width="17" height="17" viewBox="0 0 17 17"><circle cx="8.5" cy="8.5" r="7.2" fill="none" stroke="#3d6a95" stroke-width="1.2"/><circle cx="8.5" cy="5" r="1" fill="#3d6a95"/><path d="M7 7.3 H8.9 V12.3 M7 12.3 H10.3" fill="none" stroke="#3d6a95" stroke-width="1.1"/></svg>
<div class="b" style="left:138.5px;top:1404.0px;width:1169.0px;height:1.5px;background:#e9edf0"></div>
<div class="t" style="left:216.3px;top:1425.6px;font-size:20px;color:#1d5b94;transform:scaleX(0.9653);">netbanking-loan.jar</div>
<div class="t" style="left:538.3px;top:1425.6px;font-size:20px;color:#37474f;transform:scaleX(0.9202);">Code</div>
<div class="b" style="left:744.2px;top:1422.2px;width:39.4px;height:32px;border:1.6px solid #4b5a9a;box-sizing:border-box;border-radius:3px;background:#fff"></div>
<div class="t" style="left:748.9px;top:1430.2px;font-size:17.5px;color:#4b5a9a;transform:scaleX(1.0274);-webkit-text-stroke:0.53px #4b5a9a;">650</div>
<svg class="b" style="left:811.0px;top:1426.5px;" width="122" height="22" viewBox="0 0 122 22"><path d="M0,22 L0,18 L10,12 L32,12 L48,10.5 L65,9 L75,7.5 L95,4 L122,1 L122,22 Z" fill="#fde6e3"/><polyline points="0,18 10,12 32,12 48,10.5 65,9 75,7.5 95,4 122,1" fill="none" stroke="#eea39b" stroke-width="1.5"/></svg>
<div class="b" style="left:1062.0px;top:1422.2px;width:50.6px;height:5.0px;background:#3f9b47"></div>
<div class="b" style="left:1114.4px;top:1422.2px;width:37.1px;height:5.0px;background:#d7261e"></div>
<div class="b" style="left:1153.0px;top:1422.2px;width:12.0px;height:5.0px;background:#e27b2a"></div>
<div class="b" style="left:1166.7px;top:1422.2px;width:14.0px;height:5.0px;background:#ecd43c"></div>
<div class="t" style="left:1062.0px;top:1432.8px;font-size:20px;color:#37474f;transform:scaleX(0.8965);">Total: 26</div>
<svg class="b" style="left:1137.5px;top:1435.5px;" width="17" height="17" viewBox="0 0 17 17"><circle cx="8.5" cy="8.5" r="7.2" fill="none" stroke="#3d6a95" stroke-width="1.2"/><circle cx="8.5" cy="5" r="1" fill="#3d6a95"/><path d="M7 7.3 H8.9 V12.3 M7 12.3 H10.3" fill="none" stroke="#3d6a95" stroke-width="1.1"/></svg>
<div class="b" style="left:138.5px;top:1470.5px;width:1169.0px;height:1.5px;background:#e9edf0"></div>
<div class="t" style="left:216.3px;top:1492.1px;font-size:20px;color:#1d5b94;transform:scaleX(0.9690);">netbanking-spdx.json</div>
<div class="t" style="left:538.3px;top:1492.1px;font-size:20px;color:#37474f;transform:scaleX(0.8965);">SBOM</div>
<div class="b" style="left:744.2px;top:1488.7px;width:39.4px;height:32px;border:1.6px solid #4b5a9a;box-sizing:border-box;border-radius:3px;background:#fff"></div>
<div class="t" style="left:748.9px;top:1496.7px;font-size:17.5px;color:#4b5a9a;transform:scaleX(1.0274);-webkit-text-stroke:0.53px #4b5a9a;">600</div>
<svg class="b" style="left:811.0px;top:1493.0px;" width="122" height="22" viewBox="0 0 122 22"><path d="M0,22 L0,18 L10,12 L32,12 L48,10.5 L65,9 L75,7.5 L95,4 L122,1 L122,22 Z" fill="#fde6e3"/><polyline points="0,18 10,12 32,12 48,10.5 65,9 75,7.5 95,4 122,1" fill="none" stroke="#eea39b" stroke-width="1.5"/></svg>
<div class="b" style="left:1062.0px;top:1488.7px;width:50.6px;height:5.0px;background:#3f9b47"></div>
<div class="b" style="left:1114.4px;top:1488.7px;width:37.1px;height:5.0px;background:#d7261e"></div>
<div class="b" style="left:1153.0px;top:1488.7px;width:12.0px;height:5.0px;background:#e27b2a"></div>
<div class="b" style="left:1166.7px;top:1488.7px;width:14.0px;height:5.0px;background:#ecd43c"></div>
<div class="t" style="left:1062.0px;top:1499.3px;font-size:20px;color:#37474f;transform:scaleX(0.8965);">Total: 13</div>
<svg class="b" style="left:1137.5px;top:1502.0px;" width="17" height="17" viewBox="0 0 17 17"><circle cx="8.5" cy="8.5" r="7.2" fill="none" stroke="#3d6a95" stroke-width="1.2"/><circle cx="8.5" cy="5" r="1" fill="#3d6a95"/><path d="M7 7.3 H8.9 V12.3 M7 12.3 H10.3" fill="none" stroke="#3d6a95" stroke-width="1.1"/></svg>
<div class="b" style="left:138.5px;top:1537.0px;width:1169.0px;height:1.5px;background:#e9edf0"></div>
<div class="t" style="left:216.3px;top:1558.6px;font-size:20px;color:#1d5b94;transform:scaleX(0.9575);">netbanking-deployment.y...</div>
<div class="t" style="left:538.3px;top:1558.6px;font-size:20px;color:#37474f;transform:scaleX(0.8868);">IaC</div>
<div class="b" style="left:744.2px;top:1555.2px;width:39.4px;height:32px;border:1.6px solid #9a5426;box-sizing:border-box;border-radius:3px;background:#fff"></div>
<div class="t" style="left:748.9px;top:1563.2px;font-size:17.5px;color:#8e4a1e;transform:scaleX(1.0274);-webkit-text-stroke:0.53px #8e4a1e;">712</div>
<svg class="b" style="left:811.0px;top:1559.5px;" width="122" height="22" viewBox="0 0 122 22"><path d="M0,22 L0,1 L14,7 L32,10 L52,7 L68,12 L90,13 L122,16 L122,22 Z" fill="#e2efe0"/><polyline points="0,1 14,7 32,10 52,7 68,12 90,13 122,16" fill="none" stroke="#a6cda3" stroke-width="1.5"/></svg>
<div class="b" style="left:1062.0px;top:1555.2px;width:50.6px;height:5.0px;background:#3f9b47"></div>
<div class="b" style="left:1114.4px;top:1555.2px;width:37.1px;height:5.0px;background:#d7261e"></div>
<div class="b" style="left:1153.0px;top:1555.2px;width:12.0px;height:5.0px;background:#e27b2a"></div>
<div class="b" style="left:1166.7px;top:1555.2px;width:14.0px;height:5.0px;background:#ecd43c"></div>
<div class="t" style="left:1062.0px;top:1565.8px;font-size:20px;color:#37474f;transform:scaleX(0.8965);">Total: 21</div>
<svg class="b" style="left:1137.5px;top:1568.5px;" width="17" height="17" viewBox="0 0 17 17"><circle cx="8.5" cy="8.5" r="7.2" fill="none" stroke="#3d6a95" stroke-width="1.2"/><circle cx="8.5" cy="5" r="1" fill="#3d6a95"/><path d="M7 7.3 H8.9 V12.3 M7 12.3 H10.3" fill="none" stroke="#3d6a95" stroke-width="1.1"/></svg>
<div class="b" style="left:138.5px;top:1603.5px;width:1169.0px;height:1.5px;background:#e9edf0"></div>
<div class="t" style="left:216.3px;top:1625.1px;font-size:20px;color:#1d5b94;transform:scaleX(0.9718);">elasticsearch 8.4</div>
<div class="t" style="left:538.3px;top:1625.1px;font-size:20px;color:#37474f;transform:scaleX(0.9776);">Tech</div>
<div class="b" style="left:744.2px;top:1621.7px;width:39.4px;height:32px;border:1.6px solid #4b5a9a;box-sizing:border-box;border-radius:3px;background:#fff"></div>
<div class="t" style="left:748.9px;top:1629.7px;font-size:17.5px;color:#4b5a9a;transform:scaleX(1.0274);-webkit-text-stroke:0.53px #4b5a9a;">620</div>
<svg class="b" style="left:811.0px;top:1626.0px;" width="122" height="22" viewBox="0 0 122 22"><path d="M0,22 L0,18 L10,12 L32,12 L48,10.5 L65,9 L75,7.5 L95,4 L122,1 L122,22 Z" fill="#fde6e3"/><polyline points="0,18 10,12 32,12 48,10.5 65,9 75,7.5 95,4 122,1" fill="none" stroke="#eea39b" stroke-width="1.5"/></svg>
<div class="b" style="left:1062.0px;top:1621.7px;width:50.6px;height:5.0px;background:#3f9b47"></div>
<div class="b" style="left:1114.4px;top:1621.7px;width:37.1px;height:5.0px;background:#d7261e"></div>
<div class="b" style="left:1153.0px;top:1621.7px;width:12.0px;height:5.0px;background:#e27b2a"></div>
<div class="b" style="left:1166.7px;top:1621.7px;width:14.0px;height:5.0px;background:#ecd43c"></div>
<div class="t" style="left:1062.0px;top:1632.3px;font-size:20px;color:#37474f;transform:scaleX(0.8965);">Total: 85</div>
<svg class="b" style="left:1137.5px;top:1635.0px;" width="17" height="17" viewBox="0 0 17 17"><circle cx="8.5" cy="8.5" r="7.2" fill="none" stroke="#3d6a95" stroke-width="1.2"/><circle cx="8.5" cy="5" r="1" fill="#3d6a95"/><path d="M7 7.3 H8.9 V12.3 M7 12.3 H10.3" fill="none" stroke="#3d6a95" stroke-width="1.1"/></svg>
<div class="b" style="left:138.5px;top:1670.0px;width:1169.0px;height:1.5px;background:#e9edf0"></div>
<div class="b" style="left:1364.0px;top:1057.0px;width:699.5px;height:640.5px;background:#fff;border-radius:11px;box-shadow:0 3px 4px -1px rgba(0,0,0,0.12),0 0 2px rgba(0,0,0,0.07);"></div>
<div class="t" style="left:1391.2px;top:1088.5px;font-size:23px;color:#1b1f22;transform:scaleX(0.9454);-webkit-text-stroke:0.69px #1b1f22;">Top 10 Observed PII Data Types</div>
<svg class="b" style="left:0;top:0" width="2100" height="1700"><defs><filter id="dsh" x="-30%" y="-30%" width="160%" height="160%"><feDropShadow dx="0" dy="10" stdDeviation="10" flood-color="#000" flood-opacity="0.15"/></filter><radialGradient id="inn" cx="50%" cy="45%" r="55%"><stop offset="0.75" stop-color="#f4f6f9"/><stop offset="1" stop-color="#e2e8ef"/></radialGradient><radialGradient id="sg0" gradientUnits="userSpaceOnUse" cx="1559.9" cy="1375.6" r="137"><stop offset="0.815" stop-color="#4d6fd6"/><stop offset="0.87" stop-color="#0f2ea0"/><stop offset="0.92" stop-color="#0f2ea0"/><stop offset="1" stop-color="#4d6fd6"/></radialGradient><radialGradient id="sg1" gradientUnits="userSpaceOnUse" cx="1559.9" cy="1375.6" r="137"><stop offset="0.815" stop-color="#5ad0c4"/><stop offset="0.87" stop-color="#16a394"/><stop offset="0.92" stop-color="#16a394"/><stop offset="1" stop-color="#5ad0c4"/></radialGradient><radialGradient id="sg2" gradientUnits="userSpaceOnUse" cx="1559.9" cy="1375.6" r="137"><stop offset="0.815" stop-color="#8a2a2e"/><stop offset="0.87" stop-color="#5c0a0e"/><stop offset="0.92" stop-color="#5c0a0e"/><stop offset="1" stop-color="#8a2a2e"/></radialGradient><radialGradient id="sg3" gradientUnits="userSpaceOnUse" cx="1559.9" cy="1375.6" r="137"><stop offset="0.815" stop-color="#d1a8f7"/><stop offset="0.87" stop-color="#b47cf0"/><stop offset="0.92" stop-color="#b47cf0"/><stop offset="1" stop-color="#d1a8f7"/></radialGradient><radialGradient id="sg4" gradientUnits="userSpaceOnUse" cx="1559.9" cy="1375.6" r="137"><stop offset="0.815" stop-color="#c85de0"/><stop offset="0.87" stop-color="#a00fc4"/><stop offset="0.92" stop-color="#a00fc4"/><stop offset="1" stop-color="#c85de0"/></radialGradient><radialGradient id="sg5" gradientUnits="userSpaceOnUse" cx="1559.9" cy="1375.6" r="137"><stop offset="0.815" stop-color="#9cc0e6"/><stop offset="0.87" stop-color="#6a9fd6"/><stop offset="0.92" stop-color="#6a9fd6"/><stop offset="1" stop-color="#9cc0e6"/></radialGradient><radialGradient id="sg6" gradientUnits="userSpaceOnUse" cx="1559.9" cy="1375.6" r="137"><stop offset="0.815" stop-color="#f8d060"/><stop offset="0.87" stop-color="#f2b320"/><stop offset="0.92" stop-color="#f2b320"/><stop offset="1" stop-color="#f8d060"/></radialGradient><radialGradient id="sg7" gradientUnits="userSpaceOnUse" cx="1559.9" cy="1375.6" r="137"><stop offset="0.815" stop-color="#efb57c"/><stop offset="0.87" stop-color="#e5994f"/><stop offset="0.92" stop-color="#e5994f"/><stop offset="1" stop-color="#efb57c"/></radialGradient><radialGradient id="sg8" gradientUnits="userSpaceOnUse" cx="1559.9" cy="1375.6" r="137"><stop offset="0.815" stop-color="#98bde6"/><stop offset="0.87" stop-color="#6b9fd8"/><stop offset="0.92" stop-color="#6b9fd8"/><stop offset="1" stop-color="#98bde6"/></radialGradient></defs><circle cx="1559.9" cy="1375.6" r="137" fill="#fff" filter="url(#dsh)"/><path d="M1550.38,1239.43 A136.5,136.5 0 0 1 1667.46,1459.64 L1647.76,1444.25 A111.5,111.5 0 0 0 1552.12,1264.37 Z" fill="url(#sg0)" stroke="#fff" stroke-width="2.6" stroke-linejoin="round"/><path d="M1667.46,1459.64 A136.5,136.5 0 0 1 1487.57,1491.36 L1500.81,1470.16 A111.5,111.5 0 0 0 1647.76,1444.25 Z" fill="url(#sg1)" stroke="#fff" stroke-width="2.6" stroke-linejoin="round"/><path d="M1487.57,1491.36 A136.5,136.5 0 0 1 1430.84,1420.04 L1454.47,1411.90 A111.5,111.5 0 0 0 1500.81,1470.16 Z" fill="url(#sg2)" stroke="#fff" stroke-width="2.6" stroke-linejoin="round"/><path d="M1430.84,1420.04 A136.5,136.5 0 0 1 1423.40,1375.60 L1448.40,1375.60 A111.5,111.5 0 0 0 1454.47,1411.90 Z" fill="url(#sg3)" stroke="#fff" stroke-width="2.6" stroke-linejoin="round"/><path d="M1423.40,1375.60 A136.5,136.5 0 0 1 1430.84,1331.16 L1454.47,1339.30 A111.5,111.5 0 0 0 1448.40,1375.60 Z" fill="url(#sg4)" stroke="#fff" stroke-width="2.6" stroke-linejoin="round"/><path d="M1430.84,1331.16 A136.5,136.5 0 0 1 1455.33,1287.86 L1474.49,1303.93 A111.5,111.5 0 0 0 1454.47,1339.30 Z" fill="url(#sg5)" stroke="#fff" stroke-width="2.6" stroke-linejoin="round"/><path d="M1455.33,1287.86 A136.5,136.5 0 0 1 1495.82,1255.08 L1507.55,1277.15 A111.5,111.5 0 0 0 1474.49,1303.93 Z" fill="url(#sg6)" stroke="#fff" stroke-width="2.6" stroke-linejoin="round"/><path d="M1495.82,1255.08 A136.5,136.5 0 0 1 1526.88,1243.15 L1532.93,1267.41 A111.5,111.5 0 0 0 1507.55,1277.15 Z" fill="url(#sg7)" stroke="#fff" stroke-width="2.6" stroke-linejoin="round"/><path d="M1526.88,1243.15 A136.5,136.5 0 0 1 1550.38,1239.43 L1552.12,1264.37 A111.5,111.5 0 0 0 1532.93,1267.41 Z" fill="url(#sg8)" stroke="#fff" stroke-width="2.6" stroke-linejoin="round"/><circle cx="1559.9" cy="1375.6" r="111" fill="url(#inn)"/><circle cx="1559.9" cy="1375.6" r="99" fill="#f3f5f8" style="filter:drop-shadow(0 0 4px rgba(160,175,195,0.45))"/></svg>
<div class="t" style="left:1533.4px;top:1335.2px;font-size:50px;color:#1a5ea8;transform:scaleX(0.9523);-webkit-text-stroke:2.0px #1a5ea8;">73</div>
<div class="t" style="left:1513.2px;top:1395.4px;font-size:19px;color:#37474f;transform:scaleX(0.9714);-webkit-text-stroke:0.57px #37474f;">Total Count</div>
<div class="b" style="left:1759.6px;top:1175.3px;width:14.0px;height:14.0px;background:#0f2a9c;border-radius:3px"></div>
<div class="t" style="left:1785.5px;top:1172.4px;font-size:20px;color:#4b5a63;transform:scaleX(0.9691);">Mobile Number</div>
<div class="t" style="left:1982.1px;top:1173.9px;font-size:17px;color:#1f5fa0;-webkit-text-stroke:0.51px #1f5fa0;">25</div>
<div class="b" style="left:1759.6px;top:1215.3px;width:14.0px;height:14.0px;background:#1aa096;border-radius:3px"></div>
<div class="t" style="left:1785.5px;top:1212.4px;font-size:20px;color:#4b5a63;transform:scaleX(0.9241);">Email ID</div>
<div class="t" style="left:1982.1px;top:1213.9px;font-size:17px;color:#1f5fa0;-webkit-text-stroke:0.51px #1f5fa0;">24</div>
<div class="b" style="left:1759.6px;top:1255.7px;width:14.0px;height:14.0px;background:#4e0808;border-radius:3px"></div>
<div class="t" style="left:1785.5px;top:1252.8px;font-size:20px;color:#4b5a63;transform:scaleX(0.9623);">Bank Account No.</div>
<div class="t" style="left:1991.5px;top:1254.3px;font-size:17px;color:#1f5fa0;-webkit-text-stroke:0.51px #1f5fa0;">7</div>
<div class="b" style="left:1759.6px;top:1295.7px;width:14.0px;height:14.0px;background:#b07ef0;border-radius:3px"></div>
<div class="t" style="left:1785.5px;top:1292.8px;font-size:20px;color:#4b5a63;transform:scaleX(0.9561);">Auth Token</div>
<div class="t" style="left:1991.5px;top:1294.3px;font-size:17px;color:#1f5fa0;-webkit-text-stroke:0.51px #1f5fa0;">5</div>
<div class="b" style="left:1759.6px;top:1336.0px;width:14.0px;height:14.0px;background:#a111c6;border-radius:3px"></div>
<div class="t" style="left:1785.5px;top:1333.1px;font-size:20px;color:#4b5a63;transform:scaleX(0.8958);">API Key</div>
<div class="t" style="left:1991.5px;top:1334.6px;font-size:17px;color:#1f5fa0;-webkit-text-stroke:0.51px #1f5fa0;">4</div>
<div class="b" style="left:1759.6px;top:1376.0px;width:14.0px;height:14.0px;background:#79a6d8;border-radius:3px"></div>
<div class="t" style="left:1785.5px;top:1373.1px;font-size:20px;color:#4b5a63;transform:scaleX(0.9547);">Contact No.</div>
<div class="t" style="left:1991.5px;top:1374.6px;font-size:17px;color:#1f5fa0;-webkit-text-stroke:0.51px #1f5fa0;">3</div>
<div class="b" style="left:1759.6px;top:1415.8px;width:14.0px;height:14.0px;background:#f4dc57;border-radius:3px"></div>
<div class="t" style="left:1785.5px;top:1412.9px;font-size:20px;color:#4b5a63;transform:scaleX(0.9567);">IP Address</div>
<div class="t" style="left:1991.5px;top:1414.4px;font-size:17px;color:#1f5fa0;-webkit-text-stroke:0.51px #1f5fa0;">2</div>
<div class="b" style="left:1759.6px;top:1455.8px;width:14.0px;height:14.0px;background:#ea9a4d;border-radius:3px"></div>
<div class="t" style="left:1785.5px;top:1452.9px;font-size:20px;color:#4b5a63;transform:scaleX(0.8970);">PCI DSS (Open)</div>
<div class="t" style="left:1991.5px;top:1454.4px;font-size:17px;color:#1f5fa0;-webkit-text-stroke:0.51px #1f5fa0;">2</div>
<div class="b" style="left:1759.6px;top:1509.5px;width:14.0px;height:14.0px;background:#e0625a;border-radius:3px"></div>
<div class="t" style="left:1785.5px;top:1492.9px;font-size:20px;color:#4b5a63;transform:scaleX(0.9587);">Personal Info</div>
<div class="t" style="left:1991.5px;top:1507.3px;font-size:17px;color:#1f5fa0;-webkit-text-stroke:0.51px #1f5fa0;">1</div>
<div class="b" style="left:1759.6px;top:1563.7px;width:14.0px;height:14.0px;background:#3f7bc4;border-radius:3px"></div>
<div class="t" style="left:1785.5px;top:1560.8px;font-size:20px;color:#4b5a63;transform:scaleX(0.9597);">Banking Info</div>
<div class="t" style="left:1991.5px;top:1562.3px;font-size:17px;color:#1f5fa0;-webkit-text-stroke:0.51px #1f5fa0;">0</div>
<div class="t" style="left:1785.5px;top:1520.7px;font-size:20px;color:#4b5a63;transform:scaleX(0.9572);">North...</div>
<div class="b" style="left:2097.5px;top:1232.0px;width:574.0px;height:465.5px;background:#fff;border-radius:11px;box-shadow:0 3px 4px -1px rgba(0,0,0,0.12),0 0 2px rgba(0,0,0,0.07);"></div>
<div class="t" style="left:2125.0px;top:1262.0px;font-size:23px;color:#1b1f22;transform:scaleX(0.9479);-webkit-text-stroke:0.69px #1b1f22;">Confirmed Vulnerabilities By QDS Range</div>
<svg class="b" style="left:0;top:0" width="2700" height="1700"><defs><filter id="psh" x="-30%" y="-30%" width="160%" height="170%"><feDropShadow dx="0" dy="12" stdDeviation="11" flood-color="#000" flood-opacity="0.20"/></filter><radialGradient id="pgcrit" gradientUnits="userSpaceOnUse" cx="2256.5" cy="1499" r="124.5"><stop offset="0.74" stop-color="#c4042b"/><stop offset="0.86" stop-color="#c4042b"/><stop offset="1" stop-color="#ea4a70"/></radialGradient><radialGradient id="pghigh" gradientUnits="userSpaceOnUse" cx="2256.5" cy="1499" r="124.5"><stop offset="0.74" stop-color="#ed4220"/><stop offset="0.86" stop-color="#ed4220"/><stop offset="1" stop-color="#f7845f"/></radialGradient><radialGradient id="pgmed" gradientUnits="userSpaceOnUse" cx="2256.5" cy="1499" r="124.5"><stop offset="0.74" stop-color="#a25cf8"/><stop offset="0.86" stop-color="#a25cf8"/><stop offset="1" stop-color="#c39cf6"/></radialGradient><radialGradient id="pglow" gradientUnits="userSpaceOnUse" cx="2256.5" cy="1499" r="124.5"><stop offset="0.74" stop-color="#fcc85a"/><stop offset="0.86" stop-color="#fcc85a"/><stop offset="1" stop-color="#fde4ac"/></radialGradient></defs><circle cx="2256.5" cy="1499" r="122.5" fill="#fff" filter="url(#psh)"/><path d="M2257.70,1497.80 L2257.70,1373.30 A124.5,124.5 0 0 1 2356.47,1422.01 Z" fill="url(#pgcrit)"/><path d="M2258.90,1499.60 L2357.67,1423.81 A124.5,124.5 0 0 1 2383.40,1499.60 Z" fill="url(#pghigh)"/><path d="M2257.10,1501.40 L2381.60,1501.40 A124.5,124.5 0 0 1 2257.10,1625.90 Z" fill="url(#pgmed)"/><path d="M2255.90,1499.00 L2255.90,1623.50 A124.5,124.5 0 0 1 2255.90,1374.50 Z" fill="url(#pglow)"/><path d="M2256.50,1499.00 L2256.50,1371.50" stroke="#fff" stroke-width="4"/><path d="M2256.50,1499.00 L2357.65,1421.38" stroke="#fff" stroke-width="4"/><path d="M2256.50,1499.00 L2384.00,1499.00" stroke="#fff" stroke-width="4"/><path d="M2256.50,1499.00 L2256.50,1626.50" stroke="#fff" stroke-width="4"/></svg>
<div class="t" style="left:2429.0px;top:1385.4px;font-size:19px;color:#263238;transform:scaleX(0.9608);">Total Vulnerabilities</div>
<div class="t" style="left:2429.0px;top:1413.4px;font-size:43px;color:#1a5ea8;transform:scaleX(1.0282);-webkit-text-stroke:1.1px #1a5ea8;">240</div>
<div class="b" style="left:2434.8px;top:1480.7px;width:13.0px;height:13.0px;background:#c10d2e;border-radius:2px"></div>
<div class="t" style="left:2459.4px;top:1480.0px;font-size:18px;color:#5f6b73;transform:scaleX(0.9214);">Critical (90-100)</div>
<div class="t" style="left:2617.1px;top:1480.8px;font-size:17px;color:#1f5fa0;-webkit-text-stroke:0.51px #1f5fa0;">52</div>
<div class="b" style="left:2434.8px;top:1516.3px;width:13.0px;height:13.0px;background:#ec4225;border-radius:2px"></div>
<div class="t" style="left:2459.4px;top:1515.6px;font-size:18px;color:#5f6b73;transform:scaleX(0.9100);">High (70-89)</div>
<div class="t" style="left:2617.1px;top:1516.4px;font-size:17px;color:#1f5fa0;-webkit-text-stroke:0.51px #1f5fa0;">20</div>
<div class="b" style="left:2434.8px;top:1551.9px;width:13.0px;height:13.0px;background:#a35bf3;border-radius:2px"></div>
<div class="t" style="left:2459.4px;top:1551.2px;font-size:18px;color:#5f6b73;transform:scaleX(0.9239);">Medium (40-69)</div>
<div class="t" style="left:2617.1px;top:1552.0px;font-size:17px;color:#1f5fa0;-webkit-text-stroke:0.51px #1f5fa0;">60</div>
<div class="b" style="left:2434.8px;top:1587.5px;width:13.0px;height:13.0px;background:#fbc55a;border-radius:2px"></div>
<div class="t" style="left:2459.4px;top:1586.8px;font-size:18px;color:#5f6b73;transform:scaleX(0.9118);">Low (1-39)</div>
<div class="t" style="left:2608.9px;top:1587.6px;font-size:17px;color:#1f5fa0;-webkit-text-stroke:0.51px #1f5fa0;">110</div>
<div class="b" style="left:111.0px;top:1726.0px;width:635.0px;height:364.5px;background:#fff;border-radius:11px;box-shadow:0 3px 4px -1px rgba(0,0,0,0.12),0 0 2px rgba(0,0,0,0.07);"></div>
<div class="t" style="left:139.0px;top:1754.5px;font-size:23px;color:#1b1f22;transform:scaleX(0.9059);-webkit-text-stroke:0.69px #1b1f22;">VULNERABILITIES BY STATUS</div>
<div class="b" style="left:139.0px;top:1814.0px;width:579.7px;height:49.0px;background:#edf2f7;border-radius:8px"></div>
<div class="t" style="left:166.0px;top:1829.9px;font-size:19px;color:#4f6472;transform:scaleX(0.8358);-webkit-text-stroke:0.57px #4f6472;">STATUS</div>
<div class="t" style="left:636.5px;top:1829.9px;font-size:19px;color:#4f6472;transform:scaleX(0.8001);-webkit-text-stroke:0.57px #4f6472;">COUNT</div>
<div class="t" style="left:170.3px;top:1879.1px;font-size:20px;color:#3c474d;transform:scaleX(0.8838);">NEW</div>
<div class="t" style="left:657.1px;top:1879.1px;font-size:20px;color:#3c474d;">300</div>
<div class="b" style="left:139.0px;top:1911.8px;width:579.7px;height:1.5px;background:#e9edf0"></div>
<div class="t" style="left:170.3px;top:1929.1px;font-size:20px;color:#3c474d;transform:scaleX(0.8952);">ACTIVE</div>
<div class="t" style="left:657.1px;top:1929.1px;font-size:20px;color:#3c474d;">340</div>
<div class="b" style="left:139.0px;top:1961.8px;width:579.7px;height:1.5px;background:#e9edf0"></div>
<div class="t" style="left:170.3px;top:1979.1px;font-size:20px;color:#3c474d;transform:scaleX(0.8646);">FIXED</div>
<div class="t" style="left:657.1px;top:1979.1px;font-size:20px;color:#3c474d;">120</div>
<div class="b" style="left:139.0px;top:2011.8px;width:579.7px;height:1.5px;background:#e9edf0"></div>
<div class="t" style="left:170.3px;top:2029.1px;font-size:20px;color:#3c474d;transform:scaleX(0.8544);">REOPENED</div>
<div class="t" style="left:668.3px;top:2029.1px;font-size:20px;color:#3c474d;">70</div>
<div class="b" style="left:139.0px;top:2061.8px;width:579.7px;height:1.5px;background:#e9edf0"></div>
<div class="b" style="left:775.0px;top:1726.0px;width:1291.0px;height:364.0px;background:#fff;border-radius:11px;box-shadow:0 3px 4px -1px rgba(0,0,0,0.12),0 0 2px rgba(0,0,0,0.07);"></div>
<div class="t" style="left:802.4px;top:1757.2px;font-size:23px;color:#1b1f22;transform:scaleX(0.9648);-webkit-text-stroke:0.69px #1b1f22;">Detections In The Last 12 Months</div>
<div class="t" style="left:808.7px;top:1859.7px;font-size:16.5px;color:#6b7780;transform:scaleX(0.8600);">1200</div>
<div class="t" style="left:809.8px;top:1894.5px;font-size:16.5px;color:#6b7780;transform:scaleX(0.8600);">1100</div>
<div class="t" style="left:808.7px;top:1930.0px;font-size:16.5px;color:#6b7780;transform:scaleX(0.8600);">1000</div>
<div class="t" style="left:816.6px;top:1965.0px;font-size:16.5px;color:#6b7780;transform:scaleX(0.8600);">900</div>
<div class="t" style="left:816.6px;top:2000.0px;font-size:16.5px;color:#6b7780;transform:scaleX(0.8600);">800</div>
<div class="t" style="left:852.4px;top:2020.5px;font-size:16.5px;color:#6b7780;transform:scaleX(0.8700);">Jan 24</div>
<div class="t" style="left:928.0px;top:2020.5px;font-size:16.5px;color:#6b7780;transform:scaleX(0.8700);">Feb 24</div>
<div class="t" style="left:1004.0px;top:2020.5px;font-size:16.5px;color:#6b7780;transform:scaleX(0.8700);">Mar 24</div>
<div class="t" style="left:1079.7px;top:2020.5px;font-size:16.5px;color:#6b7780;transform:scaleX(0.8700);">Apr 24</div>
<div class="t" style="left:1155.5px;top:2020.5px;font-size:16.5px;color:#6b7780;transform:scaleX(0.8700);">May 24</div>
<div class="t" style="left:1231.5px;top:2020.5px;font-size:16.5px;color:#6b7780;transform:scaleX(0.8700);">Jun 24</div>
<div class="t" style="left:1307.0px;top:2020.5px;font-size:16.5px;color:#6b7780;transform:scaleX(0.8700);">Jul 24</div>
<div class="t" style="left:1383.0px;top:2020.5px;font-size:16.5px;color:#6b7780;transform:scaleX(0.8700);">Aug 24</div>
<div class="t" style="left:1458.7px;top:2020.5px;font-size:16.5px;color:#6b7780;transform:scaleX(0.8700);">Sep 24</div>
<div class="t" style="left:1535.0px;top:2020.5px;font-size:16.5px;color:#6b7780;transform:scaleX(0.8700);">Oct 24</div>
<div class="t" style="left:1611.0px;top:2020.5px;font-size:16.5px;color:#6b7780;transform:scaleX(0.8700);">Nov 24</div>
<div class="t" style="left:1686.8px;top:2020.5px;font-size:16.5px;color:#6b7780;transform:scaleX(0.8700);">Dec 24</div>
<svg class="b" style="left:0;top:0" width="2100" height="2118"><defs><linearGradient id="dg" x1="0" y1="1901" x2="0" y2="2014" gradientUnits="userSpaceOnUse"><stop offset="0" stop-color="#b5cfeb"/><stop offset="1" stop-color="#e6eef6"/></linearGradient></defs><path d="M852.4 1868.2 H1747" stroke="#d5dadf" stroke-width="1.3" stroke-dasharray="4 4"/><path d="M852.4 1904.6 H1747" stroke="#d5dadf" stroke-width="1.3" stroke-dasharray="4 4"/><path d="M852.4 1940.4 H1747" stroke="#d5dadf" stroke-width="1.3" stroke-dasharray="4 4"/><path d="M852.4 1976.8 H1747" stroke="#d5dadf" stroke-width="1.3" stroke-dasharray="4 4"/><path d="M855.5,2014 L855.5,1989 L1029.9,1986.5 L1224.5,1960 L1344,1901 L1471.8,1971.2 L1641.2,1984.7 L1745.2,1992.1 L1745.2,2014 Z" fill="url(#dg)"/><polyline points="855.5,1989 1029.9,1986.5 1224.5,1960 1344,1901 1471.8,1971.2 1641.2,1984.7 1745.2,1992.1" fill="none" stroke="#3a6c9e" stroke-width="2"/><circle cx="855.5" cy="1989" r="4" fill="#fff" stroke="#3a72a8" stroke-width="1.6"/><circle cx="1029.9" cy="1986.5" r="4" fill="#fff" stroke="#3a72a8" stroke-width="1.6"/><circle cx="1224.5" cy="1960" r="4" fill="#fff" stroke="#3a72a8" stroke-width="1.6"/><circle cx="1344" cy="1901" r="4" fill="#fff" stroke="#3a72a8" stroke-width="1.6"/><circle cx="1471.8" cy="1971.2" r="4" fill="#fff" stroke="#3a72a8" stroke-width="1.6"/><circle cx="1641.2" cy="1984.7" r="4" fill="#fff" stroke="#3a72a8" stroke-width="1.6"/></svg>
<div class="t" style="left:1785.0px;top:1893.5px;font-size:66px;color:#1a5ea8;transform:scaleX(0.9745);-webkit-text-stroke:0.9px #1a5ea8;">4100</div>
<div class="t" style="left:1943.0px;top:1927.5px;font-size:24px;color:#2b2b2b;transform:scaleX(0.8687);">(+28%)</div>
<svg class="b" style="left:2025.0px;top:1926.0px;" width="18" height="30" viewBox="0 0 18 30"><path d="M9 28 V3 M2 10 L9 3 L16 10" fill="none" stroke="#d0342c" stroke-width="2"/></svg>
<div class="t" style="left:1817.8px;top:1973.2px;font-size:18px;color:#1f5fa0;transform:scaleX(0.9234);">Showing last Year</div>
<svg class="b" style="left:1958.0px;top:1978.0px;" width="18" height="12" viewBox="0 0 18 12"><path d="M2 2 L9 9 L16 2" fill="none" stroke="#1f5fa0" stroke-width="1.6"/></svg>
<div class="b" style="left:2098.0px;top:1725.5px;width:573.5px;height:365.0px;background:#fff;border-radius:11px;box-shadow:0 3px 4px -1px rgba(0,0,0,0.12),0 0 2px rgba(0,0,0,0.07);"></div>
<div class="t" style="left:2125.0px;top:1757.7px;font-size:23px;color:#1b1f22;transform:scaleX(0.9560);-webkit-text-stroke:0.69px #1b1f22;">Vulnerabilities Fixed In The Last 30 Days</div>
<div class="t" style="left:2130.4px;top:1811.6px;font-size:13px;color:#7d878e;transform:scaleX(0.9200);">1.4K</div>
<div class="t" style="left:2130.4px;top:1841.9px;font-size:13px;color:#7d878e;transform:scaleX(0.9200);">1.2K</div>
<div class="t" style="left:2140.4px;top:1871.8px;font-size:13px;color:#7d878e;transform:scaleX(0.9200);">1K</div>
<div class="t" style="left:2135.0px;top:1901.5px;font-size:13px;color:#7d878e;transform:scaleX(0.9200);">800</div>
<div class="t" style="left:2135.0px;top:1931.5px;font-size:13px;color:#7d878e;transform:scaleX(0.9200);">600</div>
<div class="t" style="left:2135.0px;top:1961.7px;font-size:13px;color:#7d878e;transform:scaleX(0.9200);">400</div>
<div class="t" style="left:2135.0px;top:1996.0px;font-size:13px;color:#7d878e;transform:scaleX(0.9200);">200</div>
<div class="t" style="left:2148.3px;top:2030.0px;font-size:13px;color:#7d878e;transform:scaleX(0.9200);">0</div>
<svg class="b" style="left:0;top:0" width="2700" height="2118"><defs><filter id="bsh" x="-80%" y="-10%" width="260%" height="130%"><feDropShadow dx="0" dy="3" stdDeviation="4" flood-color="#000" flood-opacity="0.14"/></filter><linearGradient id="bg0" x1="0" y1="0" x2="0" y2="1"><stop offset="0" stop-color="#e13a5a"/><stop offset="0.05" stop-color="#e13a5a"/><stop offset="0.2" stop-color="#c50a2b"/><stop offset="1" stop-color="#c50a2b"/></linearGradient><linearGradient id="bg1" x1="0" y1="0" x2="0" y2="1"><stop offset="0" stop-color="#f58a72"/><stop offset="0.05" stop-color="#f58a72"/><stop offset="0.2" stop-color="#ec3f20"/><stop offset="1" stop-color="#ec3f20"/></linearGradient><linearGradient id="bg2" x1="0" y1="0" x2="0" y2="1"><stop offset="0" stop-color="#b57ff8"/><stop offset="0.05" stop-color="#b57ff8"/><stop offset="0.2" stop-color="#a25cf7"/><stop offset="1" stop-color="#a25cf7"/></linearGradient></defs><path d="M2168 1817.3 H2611" stroke="#f5f6f7" stroke-width="1"/><path d="M2168 1849.2 H2611" stroke="#f5f6f7" stroke-width="1"/><path d="M2168 1880.9 H2611" stroke="#f5f6f7" stroke-width="1"/><path d="M2168 1912.5 H2611" stroke="#f5f6f7" stroke-width="1"/><path d="M2168 1944.7 H2611" stroke="#f5f6f7" stroke-width="1"/><path d="M2168 1976.7 H2611" stroke="#f5f6f7" stroke-width="1"/><path d="M2168 2009.2 H2611" stroke="#f5f6f7" stroke-width="1"/><path d="M2168 2041.4 H2611" stroke="#f5f6f7" stroke-width="1"/><path d="M2232,2040 V1838 Q2232,1834 2236,1834 H2251.8 Q2255.8,1834 2255.8,1838 V2040 Z" fill="url(#bg0)" filter="url(#bsh)"/><path d="M2380.5,2040 V1870.3 Q2380.5,1866.3 2384.5,1866.3 H2399.8 Q2403.8,1866.3 2403.8,1870.3 V2040 Z" fill="url(#bg1)" filter="url(#bsh)"/><path d="M2530.7,2040 V1950.7 Q2530.7,1946.7 2534.7,1946.7 H2546.3 Q2550.3,1946.7 2550.3,1950.7 V2040 Z" fill="url(#bg2)" filter="url(#bsh)"/></svg>
<div class="t" style="left:2231.2px;top:1814.8px;font-size:13.5px;color:#4d5a62;">1.3k</div>
<div class="t" style="left:2225.4px;top:2051.0px;font-size:13.5px;color:#6b7780;transform:scaleX(0.9000);">Critical</div>
<div class="t" style="left:2379.7px;top:1846.5px;font-size:13.5px;color:#4d5a62;">1.1k</div>
<div class="t" style="left:2380.0px;top:2051.0px;font-size:13.5px;color:#6b7780;transform:scaleX(0.9000);">High</div>
<div class="t" style="left:2528.7px;top:1926.9px;font-size:13.5px;color:#4d5a62;">600</div>
<div class="t" style="left:2518.4px;top:2051.0px;font-size:13.5px;color:#6b7780;transform:scaleX(0.9000);">Medium</div>
</body></html>
